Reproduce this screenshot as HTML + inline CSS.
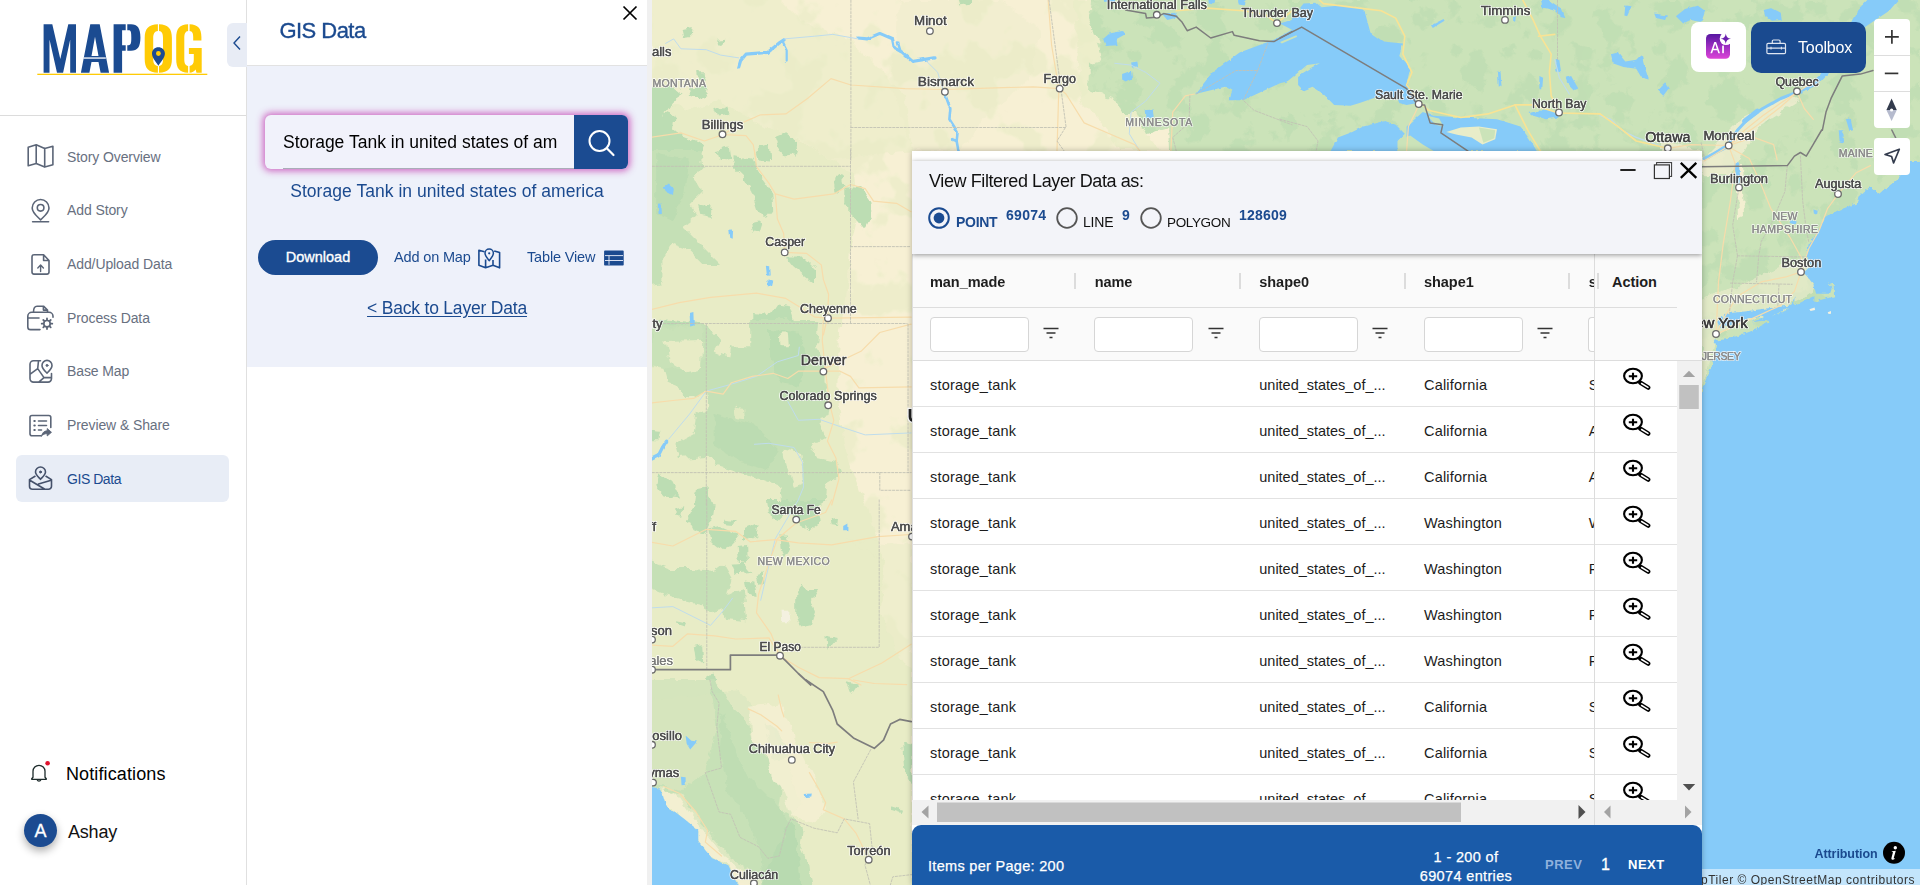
<!DOCTYPE html>
<html lang="en">
<head>
<meta charset="utf-8">
<title>MAPOG - GIS Data</title>
<style>
*{box-sizing:border-box;margin:0;padding:0}
html,body{width:1920px;height:885px;overflow:hidden;background:#fff;font-family:"Liberation Sans",sans-serif;color:#000}
.abs{position:absolute}
#sidebar{position:absolute;left:0;top:0;width:247px;height:885px;background:#fff;border-right:1px solid #e0e0e0}
#sidesep{position:absolute;left:0;top:115px;width:246px;height:1px;background:#dcdcdc}
.nav{position:absolute;left:16px;width:213px;height:47px;border-radius:6px}
.nav.active{background:#e8edf6}
.nav svg{position:absolute;left:9px;top:9px;width:30px;height:30px;fill:none;stroke:#5b6577;stroke-width:1.6;stroke-linecap:round;stroke-linejoin:round}
.nav.active svg{stroke:#45516a}
.nav span{position:absolute;left:51px;top:15.500px;font-size:14px;line-height:17px;color:#68707f;white-space:nowrap;letter-spacing:-0.1px}
.nav.active span{color:#1b4a8f;letter-spacing:-0.45px}
#collapse{position:absolute;left:227px;top:23px;width:20px;height:44px;background:#e8ecf5;border-radius:6px 0 0 6px}
#panel{position:absolute;left:247px;top:0;width:400px;height:885px;background:#fff}
#phead{position:absolute;left:0;top:0;width:400px;height:66px;background:#fff;border-bottom:1px solid #e2e2e2}
#ptitle{position:absolute;left:32.500px;top:18.200px;font-size:22px;line-height:26px;color:#1b4a8f;letter-spacing:-0.55px;white-space:nowrap;-webkit-text-stroke:0.350px #1b4a8f}
#pbody{position:absolute;left:0;top:66px;width:400px;height:301px;background:#eef1fa}
#strip{position:absolute;left:647px;top:0;width:5px;height:885px;background:#f0f0f0}
#map{position:absolute;left:652px;top:0;width:1268px;height:885px;background:#f7f0d4;overflow:hidden}

#tw{z-index:5;position:absolute;left:912px;top:151px;width:790px;height:734px;background:#fff;box-shadow:0 0 6px rgba(0,0,0,.28);overflow:hidden;font-family:"Liberation Sans",sans-serif}
#twh{position:absolute;left:0;top:10px;width:790px;height:93px;background:#f3f4f9;box-shadow:0 1px 5px rgba(0,0,0,.42);z-index:3}
#grid{position:absolute;left:0;top:103px;width:790px;height:546px;background:#fff;overflow:hidden}
#ghead{position:absolute;left:0;top:0;width:790px;height:107px;background:#fafafa}
.hl{position:absolute;left:0;height:1px;background:#dddddd}
.ch{position:absolute;top:19px;font-size:14.500px;line-height:18px;color:#1e1e1e;font-weight:bold;letter-spacing:-0.05px;white-space:nowrap;}
.cs{position:absolute;top:19px;width:2px;height:16px;background:#dcdcdc}
.fi{position:absolute;top:63px;width:99px;height:35px;border:1px solid #d6d6d6;border-radius:4px;background:#fff}
.fic{position:absolute;top:71.500px;width:16px;height:14px}
.row{position:absolute;left:0;width:765px;height:46px;border-bottom:1px solid #e2e2e2;background:#fff}
.c{position:absolute;top:14.500px;font-size:14.500px;line-height:18px;color:#1c1c1c;white-space:nowrap;letter-spacing:0.2px}
.zi{position:absolute;left:705px;top:3px;width:40px;height:32px}
#pin{position:absolute;left:682px;top:0;width:1px;height:546px;background:#dcdcdc}
#tf{position:absolute;left:0;top:674px;width:790px;height:60px;background:#1a5ba9;border-radius:9px 9px 0 0;color:#fff}
</style>
</head>
<body>
<!-- MAP -->
<div id="map">
<!--MS--><svg class="abs" style="left:0;top:0" width="1268" height="885" viewBox="652 0 1268 885">
<rect x="652" y="0" width="1268" height="885" fill="#f7f0d4"/>
<defs><filter id="rough" x="-5%" y="-5%" width="110%" height="110%"><feTurbulence type="fractalNoise" baseFrequency="0.09" numOctaves="3" seed="7" result="n"/><feDisplacementMap in="SourceGraphic" in2="n" scale="9" xChannelSelector="R" yChannelSelector="G"/></filter><filter id="rough2" x="-5%" y="-5%" width="110%" height="110%"><feTurbulence type="fractalNoise" baseFrequency="0.15" numOctaves="2" seed="3" result="n"/><feDisplacementMap in="SourceGraphic" in2="n" scale="3" xChannelSelector="R" yChannelSelector="G"/></filter><filter id="rough3" x="-5%" y="-5%" width="110%" height="110%"><feTurbulence type="fractalNoise" baseFrequency="0.22" numOctaves="2" seed="11" result="n"/><feDisplacementMap in="SourceGraphic" in2="n" scale="5" xChannelSelector="R" yChannelSelector="G"/></filter><filter id="mot" color-interpolation-filters="sRGB" x="0" y="0" width="100%" height="100%"><feTurbulence type="fractalNoise" baseFrequency="0.022" numOctaves="4" seed="5"/><feColorMatrix type="matrix" values="0 0 0 0 0.925  0 0 0 0 0.93  0 0 0 0 0.79  0 0 0 14 -7.6"/></filter><filter id="motg" color-interpolation-filters="sRGB" x="0" y="0" width="100%" height="100%"><feTurbulence type="fractalNoise" baseFrequency="0.035" numOctaves="4" seed="21"/><feColorMatrix type="matrix" values="0 0 0 0 0.74  0 0 0 0 0.865  0 0 0 0 0.70  0 0 0 14 -7.5"/></filter><clipPath id="negreen"><path d="M1091 -20L1089 18L1098 42L1102 60L1089 63L1088 90L1111 98L1122 112L1135 112L1146 134L1169 127L1171 170L1690 170L1690 440L1940 440L1940 -20Z"/></clipPath></defs>
<rect x="652" y="0" width="520" height="885" filter="url(#mot)" opacity="0.8"/>
<g filter="url(#rough)">
<path d="M652.0 95.0 L690.0 110.0 L720.0 100.0 L760.0 125.0 L800.0 140.0 L830.0 160.0 L853.0 175.0 L858.0 215.0 L850.0 250.0 L846.0 300.0 L840.0 330.0 L838.0 400.0 L846.0 450.0 L860.0 490.0 L872.0 520.0 L884.0 560.0 L880.0 610.0 L895.0 650.0 L912.0 670.0 L912.0 910.0 L630.0 910.0 L630.0 95.0Z" fill="#e8ecc6" />
<path d="M630.0 -20.0 L760.0 -20.0 L800.0 20.0 L850.0 40.0 L880.0 70.0 L905.0 95.0 L912.0 150.0 L830.0 160.0 L800.0 140.0 L760.0 125.0 L720.0 100.0 L690.0 110.0 L630.0 95.0Z" fill="#e8ecc6" opacity="0.58"/>
<path d="M900.0 0.0 L1000.0 0.0 L1040.0 30.0 L1030.0 80.0 L990.0 110.0 L960.0 150.0 L912.0 150.0 L890.0 80.0Z" fill="#e8ecc6" opacity="0.3"/>
<path d="M846.0 540.0 L912.0 545.0 L912.0 670.0 L895.0 650.0 L880.0 610.0 L884.0 560.0Z" fill="#e8ecc6" opacity="0.5"/>
<path d="M1091.0 0.0 L1089.0 18.0 L1098.0 42.0 L1102.0 60.0 L1089.0 63.0 L1088.0 90.0 L1111.0 98.0 L1122.0 112.0 L1135.0 112.0 L1146.0 134.0 L1169.0 127.0 L1171.0 170.0 L1940.0 170.0 L1940.0 -20.0 L1091.0 -20.0Z" fill="#cbe3b9" />
<path d="M1690.0 151.0 L1940.0 151.0 L1940.0 440.0 L1690.0 440.0Z" fill="#cbe3b9" />
<path d="M1075.0 0.0 L1091.0 0.0 L1089.0 18.0 L1098.0 42.0 L1102.0 60.0 L1089.0 63.0 L1088.0 90.0 L1111.0 98.0 L1122.0 112.0 L1135.0 112.0 L1146.0 134.0 L1160.0 151.0 L1120.0 151.0 L1100.0 120.0 L1080.0 100.0 L1078.0 60.0Z" fill="#e8ecc6" opacity="0.7"/>
<g clip-path="url(#negreen)"><rect x="1080" y="0" width="840" height="440" filter="url(#motg)" opacity="0.7"/></g>
<path d="M1700.0 160.0 L1740.0 120.0 L1790.0 95.0 L1800.0 100.0 L1760.0 125.0 L1745.0 150.0 L1730.0 175.0 L1705.0 175.0Z" fill="#f7f0d4" opacity="0.7"/>
<path d="M1660.0 140.0 L1700.0 150.0 L1705.0 165.0 L1660.0 155.0Z" fill="#f7f0d4" opacity="0.7"/>
<path d="M1701.0 300.0 L1740.0 285.0 L1790.0 262.0 L1812.0 268.0 L1815.0 290.0 L1800.0 300.0 L1770.0 315.0 L1740.0 322.0 L1716.0 336.0 L1708.0 372.0 L1701.0 385.0Z" fill="#f7f0d4" opacity="0.5"/>
<path d="M1736.0 165.0 L1742.0 165.0 L1744.0 215.0 L1738.0 218.0Z" fill="#f7f0d4" opacity="0.9"/>
<path d="M637.0 86.8 L673.7 86.8 L682.7 94.0 L671.9 101.2 L662.8 115.7 L671.9 126.6 L684.5 137.4 L704.4 144.6 L697.2 160.0 L637.0 160.0Z" fill="#bcddb3" />
<path d="M690.0 88.6 L704.4 86.8 L709.9 94.0 L699.0 98.5 L690.9 95.8Z" fill="#bcddb3" />
<path d="M697.2 72.3 L706.2 72.3 L704.4 79.6 L698.1 80.5Z" fill="#bcddb3" />
<path d="M682.7 28.9 L691.8 27.1 L690.9 35.3 L684.5 36.2Z" fill="#bcddb3" />
<path d="M716.2 40.7 L724.3 39.8 L722.5 46.1 L717.1 45.2Z" fill="#bcddb3" />
<path d="M715.3 110.3 L727.9 105.8 L726.1 115.7 L718.0 117.5Z" fill="#bcddb3" />
<path d="M662.8 110.3 L675.5 115.7 L673.7 130.2 L664.7 126.6Z" fill="#bcddb3" />
<path d="M774.9 137.4 L785.8 132.9 L794.8 139.2 L796.6 153.7 L785.8 155.5 L778.6 148.3Z" fill="#bcddb3" />
<path d="M758.7 148.3 L769.5 144.6 L771.3 160.0 L760.5 160.0Z" fill="#bcddb3" />
<path d="M717.1 150.1 L729.7 147.4 L731.6 160.0 L718.9 160.0Z" fill="#bcddb3" />
<path d="M953.0 -15.0 L972.0 -15.0 L972.0 2.7 L959.4 4.5Z" fill="#bcddb3" />
<path d="M637.0 150.0 L700.1 150.0 L702.2 166.7 L693.8 177.2 L702.2 191.8 L689.6 204.3 L695.9 216.9 L683.3 227.3 L693.8 237.8 L706.3 250.3 L721.0 264.9 L704.2 264.9 L689.6 250.3 L672.9 244.0 L662.4 258.7 L662.4 283.8 L637.0 287.9Z" fill="#c5e0b6" />
<path d="M733.5 156.3 L752.3 158.4 L760.7 175.1 L771.1 189.7 L772.2 208.5 L764.9 216.9 L758.6 210.6 L752.3 191.8 L741.9 175.1 L733.5 166.7Z" fill="#bcddb3" />
<path d="M844.3 187.6 L861.0 187.6 L871.4 202.2 L872.5 214.8 L865.2 229.4 L852.6 214.8 L844.3 206.4Z" fill="#bcddb3" />
<path d="M833.8 181.3 L842.2 175.1 L845.3 185.5 L835.9 193.9Z" fill="#bcddb3" />
<path d="M785.8 256.6 L802.5 256.6 L815.0 269.1 L815.0 283.8 L806.6 277.5 L794.1 267.0Z" fill="#bcddb3" />
<path d="M752.3 313.0 L769.0 315.1 L777.4 302.6 L789.9 304.6 L796.2 323.5 L810.8 335.0 L752.3 335.0Z" fill="#bcddb3" />
<path d="M698.0 204.3 L711.6 206.4 L710.5 216.9 L700.1 214.8Z" fill="#bcddb3" />
<path d="M750.2 223.1 L763.8 221.1 L760.7 231.5 L752.3 230.5Z" fill="#bcddb3" />
<path d="M716.8 150.0 L727.2 150.0 L728.3 160.4 L718.9 159.4Z" fill="#bcddb3" />
<path d="M756.5 150.0 L770.1 150.0 L768.0 162.5 L758.6 161.5Z" fill="#bcddb3" />
<path d="M789.9 150.0 L798.3 150.0 L796.2 156.3Z" fill="#bcddb3" />
<path d="M664.5 319.3 L704.2 323.5 L714.7 335.0 L637.0 335.0 L637.0 323.5Z" fill="#bcddb3" />
<path d="M750.2 320.0 L819.2 320.0 L817.1 345.1 L825.5 368.1 L825.5 382.7 L829.6 399.4 L827.5 416.1 L819.2 418.2 L825.5 437.0 L810.8 445.4 L817.1 457.9 L835.9 462.1 L840.1 474.6 L825.5 483.0 L823.4 505.0 L781.6 505.0 L779.5 487.2 L756.5 478.8 L735.6 470.5 L714.7 464.2 L708.4 455.8 L679.2 457.9 L675.0 443.3 L693.8 432.9 L695.9 416.1 L708.4 407.8 L706.3 393.1 L683.3 397.3 L679.2 386.9 L668.7 382.7 L664.5 368.1 L637.0 361.8 L637.0 326.3 L706.3 324.2 L721.0 340.9 L714.7 351.3 L729.3 357.6 L731.4 347.2 L750.2 347.2Z" fill="#c5e0b6" />
<path d="M637.0 428.7 L660.4 430.8 L658.3 441.2 L637.0 441.2Z" fill="#bcddb3" />
<path d="M658.3 474.6 L670.8 480.9 L679.2 497.6 L664.5 495.5 L656.2 485.1Z" fill="#bcddb3" />
<path d="M695.9 489.3 L706.3 487.2 L712.6 505.0 L693.8 505.0Z" fill="#bcddb3" />
<path d="M637.0 556.4 L670.8 569.0 L693.8 569.0 L714.7 571.1 L723.1 564.8 L731.4 579.4 L727.2 596.1 L735.6 592.0 L744.0 589.9 L746.0 621.2 L725.1 619.1 L723.1 608.7 L708.4 612.9 L702.2 604.5 L683.3 600.3 L664.5 594.0 L637.0 583.6Z" fill="#c5e0b6" />
<path d="M687.5 520.9 L695.9 504.2 L714.7 504.2 L712.6 516.7 L704.2 533.4 L691.7 529.3Z" fill="#bcddb3" />
<path d="M708.4 529.3 L721.0 527.2 L735.6 533.4 L737.7 541.8 L721.0 550.2 L710.5 541.8Z" fill="#bcddb3" />
<path d="M744.0 529.3 L758.6 523.0 L756.5 535.5 L744.0 539.7Z" fill="#bcddb3" />
<path d="M766.9 500.0 L825.5 500.0 L817.1 510.4 L819.2 523.0 L810.8 529.3 L798.3 520.9 L785.8 512.5 L777.4 520.9 L769.0 514.6Z" fill="#bcddb3" />
<path d="M779.5 534.5 L787.8 534.5 L789.9 548.1 L783.7 558.5 L780.5 548.1Z" fill="#bcddb3" />
<path d="M796.2 596.1 L802.5 581.5 L806.6 589.9 L817.1 589.9 L810.8 600.3 L815.0 612.9 L810.8 625.4 L800.4 627.5 L796.2 612.9Z" fill="#bcddb3" />
<path d="M737.7 546.0 L746.0 544.9 L747.1 562.7 L738.7 561.7Z" fill="#bcddb3" />
<path d="M731.4 563.7 L744.0 562.7 L752.3 573.1 L735.6 574.2Z" fill="#bcddb3" />
<path d="M746.0 579.4 L754.4 580.5 L756.5 596.1 L748.1 594.0Z" fill="#bcddb3" />
<path d="M756.5 576.3 L762.8 574.2 L763.8 582.5 L758.6 582.5Z" fill="#bcddb3" />
<path d="M826.5 637.9 L835.9 640.0 L827.5 650.5Z" fill="#bcddb3" />
<path d="M675.0 508.4 L683.3 506.3 L682.3 515.7 L676.0 514.6Z" fill="#bcddb3" />
<path d="M723.1 518.8 L735.6 519.9 L734.5 524.0 L724.1 523.0Z" fill="#bcddb3" />
<path d="M830.7 518.8 L839.0 517.8 L838.0 526.1 L831.7 525.1Z" fill="#bcddb3" />
<path d="M693.8 646.3 L702.2 644.2 L703.2 660.9 L695.9 662.0Z" fill="#bcddb3" />
<path d="M676.0 621.2 L685.4 623.3 L683.3 627.5 L677.1 625.4Z" fill="#bcddb3" />
<path d="M704.2 675.5 L714.7 673.5 L716.8 685.0 L704.2 685.0Z" fill="#bcddb3" />
<path d="M637.0 680.0 L714.5 680.0 L728.4 703.2 L744.6 717.0 L751.6 740.2 L767.8 756.4 L772.4 772.6 L781.7 788.8 L779.3 809.7 L790.9 816.6 L802.5 830.5 L800.2 846.7 L809.4 865.2 L814.1 899.9 L767.8 899.9 L758.5 876.8 L728.4 856.0 L709.9 832.8 L698.3 818.9 L682.1 795.8 L661.3 788.8 L637.0 784.2Z" fill="#c5e0b6" />
<path d="M765.5 724.0 L781.7 733.3 L788.6 756.4 L772.4 758.7Z" fill="#bcddb3" />
<path d="M846.5 682.3 L858.1 684.6 L851.1 695.0Z" fill="#bcddb3" />
<path d="M902.1 742.5 L912.5 744.8 L912.5 788.8 L904.4 772.6Z" fill="#bcddb3" />
<path d="M890.5 806.2 L902.1 809.7 L900.9 813.1 L890.5 809.7Z" fill="#bcddb3" />
<path d="M721.5 714.7 L744.6 772.6 L772.4 800.4 L795.6 830.5 L802.5 899.9 L763.1 899.9 L760.8 856.0 L751.6 828.2 L728.4 791.1 L719.1 749.5Z" fill="#b3d8ad" opacity="0.75"/>
<path d="M769.0 328.4 L798.3 332.5 L810.8 361.8 L798.3 386.9 L781.6 382.7 L769.0 357.6Z" fill="#b3d8ad" opacity="0.6"/>
<path d="M714.7 414.0 L752.3 424.5 L777.4 449.6 L769.0 470.5 L739.8 462.1 L714.7 445.4Z" fill="#b3d8ad" opacity="0.5"/>
<path d="M656.2 154.2 L689.6 158.4 L685.4 191.8 L672.9 219.0 L656.2 212.7Z" fill="#b3d8ad" opacity="0.5"/>
<path d="M652.0 330.0 L700.0 326.0 L706.0 360.0 L690.0 372.0 L652.0 366.0Z" fill="#cbe3b9" opacity="0.6"/>
<path d="M652.0 700.0 L740.0 690.0 L780.0 740.0 L800.0 800.0 L760.0 885.0 L652.0 885.0Z" fill="#cbe3b9" opacity="0.35"/>
<path d="M664.5 340.9 L702.2 339.9 L701.1 368.1 L685.4 372.2 L668.7 361.8Z" fill="#e8ecc6" />
<path d="M779.5 332.5 L787.8 332.5 L788.9 347.2 L780.5 347.2Z" fill="#e8ecc6" />
<path d="M781.6 449.6 L800.4 453.8 L804.6 483.0 L794.1 487.2 L785.8 466.3Z" fill="#e8ecc6" />
<path d="M734.5 406.7 L744.0 407.8 L745.0 418.2 L735.6 417.2Z" fill="#e8ecc6" opacity="0.8"/>
<path d="M637.0 680.0 L709.9 680.0 L716.8 726.3 L705.3 772.6 L682.1 791.1 L661.3 786.5 L637.0 781.9Z" fill="#e8ecc6" opacity="0.45"/>
<path d="M661.3 788.8 L677.5 795.8 L693.7 818.9 L706.4 832.8 L723.8 856.0 L751.6 876.8 L760.8 899.9 L744.6 899.9 L728.4 865.2 L712.2 858.3 L698.3 842.1 L698.3 830.5 L684.4 818.9 L665.9 805.0Z" fill="#f7f0d4" opacity="0.85"/>
<path d="M749.2 707.8 L781.7 703.2 L800.2 749.5 L814.1 777.2 L825.7 809.7 L814.1 823.6 L790.9 814.3 L781.7 788.8 L772.4 772.6 L767.8 756.4 L751.6 740.2Z" fill="#f7f0d4" opacity="0.75"/>
<path d="M780.5 611.8 L788.3 611.8 L788.3 622.3 L781.2 622.3Z" fill="#f4f1e0" />
</g>
<path d="M1195.3 94.0 L1212.5 72.3 L1239.6 52.4 L1275.7 38.9 L1292.0 29.8 L1280.0 23.5 L1290.8 19.9 L1303.5 3.6 L1316.2 2.7 L1321.6 7.2 L1339.7 5.4 L1359.6 7.2 L1365.0 12.7 L1370.4 32.5 L1383.1 41.6 L1402.9 43.4 L1399.3 56.0 L1410.2 68.7 L1406.6 83.2 L1413.8 94.0 L1417.4 103.1 L1406.6 104.9 L1399.3 103.1 L1397.5 98.5 L1377.6 96.7 L1359.6 103.1 L1350.5 105.8 L1334.2 104.9 L1323.4 94.0 L1312.5 86.8 L1303.5 90.4 L1298.1 85.0 L1298.1 75.9 L1312.5 66.9 L1319.8 63.3 L1307.1 65.1 L1296.3 74.1 L1287.2 81.4 L1280.0 83.2 L1268.5 88.6 L1243.2 100.3 L1228.7 100.3 L1232.4 90.4 L1225.1 86.8Z" fill="#86cbf9" filter="url(#rough2)"/>
<path d="M1280.0 41.9 L1296.3 35.3 L1297.2 36.7 L1281.8 43.4Z" fill="#cbe3b9" />
<path d="M1951.1 151.4 L1920.0 160.9 L1910.7 160.9 L1898.9 177.5 L1879.9 194.1 L1870.4 187.0 L1860.9 194.1 L1856.2 203.6 L1837.2 210.7 L1825.3 217.8 L1819.4 229.7 L1808.7 243.9 L1806.3 255.8 L1811.1 265.3 L1803.9 272.4 L1813.4 284.3 L1815.8 293.8 L1830.0 293.8 L1832.4 286.7 L1827.7 281.9 L1833.6 285.5 L1834.1 296.2 L1813.4 302.1 L1813.4 296.2 L1803.9 300.9 L1794.4 305.6 L1794.4 297.3 L1790.9 305.6 L1784.9 310.4 L1770.7 317.5 L1791.3 305.4 L1769.6 308.1 L1747.9 310.9 L1726.2 313.6 L1717.1 321.7 L1719.9 327.1 L1747.9 319.0 L1762.4 316.6 L1763.8 318.1 L1751.5 322.6 L1766.0 319.9 L1770.5 321.7 L1749.7 331.7 L1728.0 338.9 L1713.5 340.7 L1717.1 345.2 L1713.5 361.5 L1708.1 374.2 L1703.6 385.0 L1700.9 394.1 L1695.0 560.0 L1690.0 920.0 L1950.0 920.0 L1950.0 150.0Z" fill="#86cbf9" filter="url(#rough3)"/>
<path d="M1809.4 309.2 L1814.6 307.5 L1815.1 309.9 L1810.6 311.1Z" fill="#f4f1e0" />
<path d="M1827.7 312.3 L1831.0 310.9 L1831.0 313.7 L1828.6 314.0Z" fill="#f4f1e0" />
<g filter="url(#rough2)">
<path d="M638.1 779.6 L637.0 784.2 L661.3 788.8 L665.9 805.0 L684.4 818.9 L698.3 830.5 L698.3 842.1 L712.2 858.3 L728.4 865.2 L744.6 899.9 L753.9 902.3 L638.1 902.3Z" fill="#86cbf9" />
<path d="M1330.6 151.1 L1337.9 137.4 L1352.3 132.0 L1363.2 126.6 L1384.9 121.1 L1395.7 124.8 L1404.8 133.8 L1397.5 141.0 L1397.5 151.1Z" fill="#86cbf9" />
<path d="M1406.6 126.6 L1422.8 112.1 L1433.7 115.7 L1460.8 117.5 L1497.0 119.3 L1520.5 126.6 L1533.1 144.6 L1536.7 151.1 L1406.6 151.1Z" fill="#86cbf9" />
<path d="M1529.5 113.0 L1538.5 110.6 L1558.4 111.2 L1558.4 117.5 L1545.8 119.3 L1533.1 115.7Z" fill="#86cbf9" />
<path d="M1538.5 -15.0 L1551.2 1.8 L1562.0 9.0 L1565.7 18.1 L1561.1 17.2 L1554.8 10.8 L1542.2 7.2Z" fill="#86cbf9" />
<path d="M1513.2 16.3 L1515.9 16.3 L1515.0 23.5 L1513.2 22.6Z" fill="#86cbf9" />
<path d="M1431.0 25.3 L1443.6 19.0 L1444.5 20.8 L1432.8 28.0Z" fill="#86cbf9" />
<path d="M1497.9 71.4 L1500.6 72.3 L1501.5 85.0 L1498.8 86.8Z" fill="#86cbf9" />
<path d="M1539.4 75.9 L1543.1 77.7 L1542.2 89.5 L1539.4 88.6Z" fill="#86cbf9" />
<path d="M1565.7 77.7 L1571.1 75.9 L1578.3 88.6 L1573.8 90.4 L1568.4 85.0Z" fill="#86cbf9" />
<path d="M1554.8 59.7 L1559.3 59.7 L1561.1 72.3 L1556.6 71.4Z" fill="#86cbf9" />
<path d="M1103.1 38.9 L1109.4 33.4 L1122.1 31.1 L1124.8 34.4 L1116.6 38.9 L1117.5 45.2 L1105.8 46.1Z" fill="#86cbf9" />
<path d="M1122.1 74.1 L1132.0 70.5 L1132.9 77.7 L1125.7 81.4 L1122.1 79.6Z" fill="#86cbf9" />
<path d="M1131.1 62.4 L1137.4 61.5 L1138.0 66.0 L1132.0 67.8Z" fill="#86cbf9" />
<path d="M1144.7 110.3 L1152.8 109.4 L1153.7 117.5 L1145.6 118.4Z" fill="#86cbf9" />
<path d="M1161.8 13.6 L1176.3 12.7 L1178.1 17.2 L1167.3 19.9Z" fill="#86cbf9" />
<path d="M1102.2 -15.0 L1116.6 -15.0 L1114.8 1.8 L1104.0 1.8Z" fill="#86cbf9" />
<path d="M1207.0 -15.0 L1217.9 -15.0 L1214.3 4.5 L1208.8 3.6Z" fill="#86cbf9" />
<path d="M1236.0 -15.0 L1246.8 -15.0 L1245.0 5.4 L1238.7 4.5Z" fill="#86cbf9" />
<path d="M1851.3 21.7 L1858.5 9.0 L1882.0 -15.0 L1911.0 -15.0 L1889.3 10.8 L1867.6 25.3 L1860.4 30.7Z" fill="#86cbf9" />
<path d="M1826.0 68.7 L1813.3 81.4 L1797.1 92.2 L1798.9 94.0 L1817.0 85.0 L1829.6 71.4Z" fill="#86cbf9" />
<path d="M1763.6 9.9 L1771.8 8.1 L1780.8 12.7 L1781.7 19.9 L1771.8 20.8 L1765.4 15.4Z" fill="#86cbf9" />
<path d="M1675.9 16.3 L1685.0 9.0 L1697.6 5.4 L1704.9 10.8 L1701.2 21.7 L1690.4 19.9 L1683.2 23.5Z" fill="#86cbf9" />
<path d="M1610.8 54.2 L1618.1 52.4 L1625.3 61.5 L1636.2 59.7 L1641.6 54.2 L1645.2 68.7 L1648.8 79.6 L1641.6 77.7 L1636.2 68.7 L1623.5 66.9 L1612.7 63.3Z" fill="#86cbf9" />
<path d="M1657.9 90.4 L1665.1 83.2 L1668.7 88.6 L1663.3 95.8Z" fill="#86cbf9" />
<path d="M1625.3 5.4 L1631.6 6.3 L1627.1 16.3 L1624.4 15.4Z" fill="#86cbf9" />
<path d="M1654.2 13.6 L1666.9 15.4 L1665.1 19.9 L1656.0 18.1Z" fill="#86cbf9" />
<path d="M1845.9 119.3 L1850.4 118.4 L1853.1 130.2 L1849.5 131.1Z" fill="#86cbf9" />
<path d="M1838.7 130.2 L1843.2 130.2 L1844.1 142.8 L1839.6 141.0Z" fill="#86cbf9" />
<path d="M1734.6 163.2 L1738.7 163.2 L1740.3 177.5 L1737.5 191.7 L1735.1 189.3 L1736.3 177.5Z" fill="#86cbf9" />
<path d="M1813.4 209.5 L1817.7 210.7 L1817.0 215.0 L1813.9 213.6Z" fill="#86cbf9" />
<path d="M1789.7 219.7 L1796.8 221.4 L1795.6 224.5 L1790.9 223.0Z" fill="#86cbf9" />
<path d="M662.4 187.6 L667.7 183.4 L673.9 188.7 L672.9 194.9 L666.6 191.8Z" fill="#86cbf9" />
<path d="M657.9 204.8 L661.4 204.3 L662.0 213.7 L658.7 214.4Z" fill="#86cbf9" />
<path d="M729.3 229.8 L733.1 229.4 L732.7 238.8 L730.2 237.8Z" fill="#86cbf9" />
<path d="M765.9 266.0 L770.1 264.9 L770.7 275.4 L766.9 275.8Z" fill="#86cbf9" />
<path d="M767.4 279.6 L773.2 280.6 L772.2 285.8 L768.0 287.9Z" fill="#86cbf9" />
<path d="M689.6 313.0 L693.4 312.0 L693.8 325.5 L690.2 326.6Z" fill="#86cbf9" />
<path d="M843.2 526.1 L847.4 523.4 L847.4 530.3 L843.2 530.3Z" fill="#86cbf9" />
<path d="M685.6 735.6 L691.4 740.7 L697.1 741.4 L690.2 749.5 L686.7 743.7Z" fill="#86cbf9" />
<path d="M680.9 776.8 L685.6 777.2 L685.6 784.7 L681.6 785.3Z" fill="#86cbf9" />
<path d="M803.7 793.9 L811.8 793.5 L811.3 796.5 L804.4 797.2Z" fill="#86cbf9" />
</g>
<path d="M1446.3 132.0 L1460.8 127.5 L1478.9 126.6 L1497.0 129.3 L1495.2 139.2 L1482.5 144.6 L1471.6 137.4 L1457.2 134.7Z" fill="#e9edc9" />
<path d="M1478.9 127.5 L1495.2 130.2 L1494.2 138.3 L1483.4 142.8Z" fill="#cbe3b9" />
<path d="M1397.5 151.1 L1399.3 139.2 L1410.2 135.6 L1422.8 144.6 L1433.7 151.1Z" fill="#cbe3b9" />
<path d="M1427.4 115.7 L1439.1 118.4 L1443.6 126.6 L1435.5 124.8Z" fill="#cbe3b9" />
<g filter="url(#rough2)">
<path d="M738.8 66.9 L740.6 60.6 L746.0 54.2 L755.1 53.3 L767.7 52.4 L778.6 43.4 L784.0 39.8" fill="none" stroke="#86cbf9" stroke-width="3.2" stroke-linejoin="round" stroke-linecap="round" />
<path d="M782.2 41.6 L786.7 50.6 L786.7 60.6" fill="none" stroke="#86cbf9" stroke-width="2.2" stroke-linejoin="round" stroke-linecap="round" />
<path d="M858.1 38.0 L867.2 38.9 L879.8 33.4 L892.5 38.9 L894.3 47.9 L902.4 52.4 L912.4 61.5 L923.2 59.7 L934.0 57.9" fill="none" stroke="#86cbf9" stroke-width="3.2" stroke-linejoin="round" stroke-linecap="round" />
<path d="M897.9 42.5 L900.6 51.5" fill="none" stroke="#86cbf9" stroke-width="2.5" stroke-linejoin="round" stroke-linecap="round" />
<path d="M944.9 94.0 L950.3 108.5 L949.4 119.3 L957.6 132.0 L956.6 141.0 L952.1 139.2" fill="none" stroke="#86cbf9" stroke-width="2.6" stroke-linejoin="round" stroke-linecap="round" />
<path d="M956.6 141.0 L958.5 151.1" fill="none" stroke="#86cbf9" stroke-width="2.6" stroke-linejoin="round" stroke-linecap="round" />
<path d="M637.0 466.3 L658.3 455.8 L662.4 447.5 L666.6 441.2" fill="none" stroke="#86cbf9" stroke-width="3.2" stroke-linejoin="round" stroke-linecap="round" />
</g>
<path d="M1797.1 92.2 L1780.8 98.5 L1762.7 108.5 L1748.3 118.4 L1737.4 130.2 L1728.4 144.6 L1708.5 157.3" fill="none" stroke="#86cbf9" stroke-width="3" stroke-linejoin="round" stroke-linecap="round" />
<path d="M1757.3 111.2 L1744.6 121.1" fill="none" stroke="#86cbf9" stroke-width="5" stroke-linejoin="round" stroke-linecap="round" />
<path d="M1704.2 158.5 L1716.1 152.5 L1728.0 146.6" fill="none" stroke="#86cbf9" stroke-width="3" stroke-linejoin="round" stroke-linecap="round" />
<path d="M665.6 43.4 L673.7 38.9 L680.9 48.8 L706.2 49.7 L720.7 55.1 L738.8 57.9" fill="none" stroke="#bfdcec" stroke-width="1" stroke-linejoin="round" stroke-linecap="round" />
<path d="M784.0 38.9 L814.7 36.2 L832.8 34.4 L858.1 38.9" fill="none" stroke="#bfdcec" stroke-width="1" stroke-linejoin="round" stroke-linecap="round" />
<path d="M926.8 61.5 L937.7 72.3 L941.3 85.0 L944.9 92.2" fill="none" stroke="#bfdcec" stroke-width="1" stroke-linejoin="round" stroke-linecap="round" />
<path d="M1114.8 63.3 L1131.1 65.1 L1145.6 72.3 L1160.0 83.2 L1145.6 101.2 L1131.1 112.1 L1129.3 133.8 L1138.3 148.3" fill="none" stroke="#bfdcec" stroke-width="1" stroke-linejoin="round" stroke-linecap="round" />
<path d="M668.7 439.1 L689.6 414.0 L706.3 391.1 L729.3 384.8 L756.5 376.4 L777.4 361.8 L798.3 355.5 L799.3 347.2" fill="none" stroke="#bfdcec" stroke-width="1" stroke-linejoin="round" stroke-linecap="round" />
<path d="M787.8 401.5 L798.3 420.3 L819.2 419.3 L840.1 426.6 L865.2 434.9 L911.1 432.9" fill="none" stroke="#bfdcec" stroke-width="1" stroke-linejoin="round" stroke-linecap="round" />
<path d="M754.4 444.3 L769.0 443.3 L794.1 447.5 L802.5 462.1 L803.5 487.2 L798.3 499.7" fill="none" stroke="#bfdcec" stroke-width="1" stroke-linejoin="round" stroke-linecap="round" />
<path d="M798.3 500.0 L785.8 520.9 L775.3 538.7 L768.0 569.0 L760.7 600.3" fill="none" stroke="#bfdcec" stroke-width="1" stroke-linejoin="round" stroke-linecap="round" />
<path d="M637.0 608.7 L672.9 606.6 L693.8 617.0 L710.5 625.4 L723.1 610.8 L732.5 598.2" fill="none" stroke="#bfdcec" stroke-width="1" stroke-linejoin="round" stroke-linecap="round" />
<path d="M1554.8 59.7 L1559.3 77.7 L1569.3 94.0" fill="none" stroke="#bfdcec" stroke-width="1.2" stroke-linejoin="round" stroke-linecap="round" />
<path d="M1600.0 115.7 L1610.8 119.3 L1621.7 130.2 L1636.2 137.4 L1666.9 148.3" fill="none" stroke="#bfdcec" stroke-width="1.2" stroke-linejoin="round" stroke-linecap="round" />
<path d="M637.0 139.2 L680.9 132.9 L704.4 141.0 L722.5 134.7 L746.0 121.1 L760.5 114.8 L785.8 113.9 L807.5 98.5 L831.0 78.6 L850.9 85.0 L905.1 88.6 L944.9 89.5 L972.0 88.6" fill="none" stroke="#f7dcab" stroke-width="1.2" stroke-linejoin="round" stroke-linecap="round" />
<path d="M722.5 134.7 L746.0 135.6 L753.2 144.6 L756.0 160.0" fill="none" stroke="#f7dcab" stroke-width="1.2" stroke-linejoin="round" stroke-linecap="round" />
<path d="M972.0 88.6 L1033.5 86.8 L1059.7 88.6 L1066.0 94.0 L1084.1 122.9 L1109.4 133.8 L1134.7 144.6 L1140.1 151.1" fill="none" stroke="#f7dcab" stroke-width="1.2" stroke-linejoin="round" stroke-linecap="round" />
<path d="M1047.0 -15.0 L1051.6 45.2 L1058.8 88.6 L1057.0 151.1" fill="none" stroke="#f7dcab" stroke-width="1.2" stroke-linejoin="round" stroke-linecap="round" />
<path d="M1170.9 151.1 L1172.7 112.1 L1185.3 95.8 L1194.4 94.0" fill="none" stroke="#f7dcab" stroke-width="1.2" stroke-linejoin="round" stroke-linecap="round" />
<path d="M754.4 150.0 L756.5 166.7 L769.0 183.4 L775.3 193.9 L794.1 199.1 L833.8 193.9 L850.5 184.5 L865.2 188.7 L873.5 201.2 L896.5 203.3 L911.1 211.7" fill="none" stroke="#f7dcab" stroke-width="1.2" stroke-linejoin="round" stroke-linecap="round" />
<path d="M775.3 193.9 L777.4 219.0 L783.7 233.6 L784.7 252.4 L806.6 253.4 L821.3 264.9 L823.4 279.6 L828.6 294.2 L827.5 317.2 L823.4 335.0" fill="none" stroke="#f7dcab" stroke-width="1.2" stroke-linejoin="round" stroke-linecap="round" />
<path d="M637.0 313.0 L679.2 302.6 L710.5 297.3 L756.5 293.2 L785.8 298.4 L802.5 308.8 L815.0 317.2 L827.5 318.2 L911.1 317.2" fill="none" stroke="#f7dcab" stroke-width="1.2" stroke-linejoin="round" stroke-linecap="round" />
<path d="M637.0 404.6 L672.9 400.5 L693.8 398.4 L706.3 391.1 L723.1 394.2 L731.4 382.7 L752.3 376.4 L773.2 373.3 L787.8 378.5 L798.3 371.2 L823.4 371.2 L840.1 371.2 L850.5 376.4 L858.9 387.9 L911.1 386.9" fill="none" stroke="#f7dcab" stroke-width="1.2" stroke-linejoin="round" stroke-linecap="round" />
<path d="M823.4 320.0 L822.3 340.9 L825.5 371.2 L829.6 403.6 L833.8 420.3 L827.5 441.2 L835.9 457.9 L839.0 478.8 L831.7 505.0" fill="none" stroke="#f7dcab" stroke-width="1.2" stroke-linejoin="round" stroke-linecap="round" />
<path d="M825.5 368.1 L861.0 351.3 L879.8 332.5 L911.1 324.2" fill="none" stroke="#f7dcab" stroke-width="1.2" stroke-linejoin="round" stroke-linecap="round" />
<path d="M637.0 539.7 L672.9 546.0 L706.3 529.3 L735.6 531.3 L750.2 541.8 L775.3 539.7 L798.3 542.8 L831.7 544.9 L877.7 536.6 L911.1 534.5" fill="none" stroke="#f7dcab" stroke-width="1.2" stroke-linejoin="round" stroke-linecap="round" />
<path d="M831.7 500.0 L825.5 512.5 L796.2 523.0 L777.4 538.7 L769.0 562.7 L758.6 594.0 L756.5 612.9 L771.1 633.8 L779.5 655.7" fill="none" stroke="#f7dcab" stroke-width="1.2" stroke-linejoin="round" stroke-linecap="round" />
<path d="M637.0 644.2 L672.9 646.3 L687.5 633.8 L714.7 635.8 L735.6 639.0 L769.0 637.9 L779.5 655.7 L798.3 667.2 L819.2 677.6 L848.4 678.7 L881.9 663.0 L911.1 644.2" fill="none" stroke="#f7dcab" stroke-width="1.2" stroke-linejoin="round" stroke-linecap="round" />
<path d="M848.4 678.7 L861.0 685.0" fill="none" stroke="#f7dcab" stroke-width="1.2" stroke-linejoin="round" stroke-linecap="round" />
<path d="M748.1 708.9 L760.8 714.7 L777.0 726.3 L781.7 730.9" fill="none" stroke="#f7dcab" stroke-width="1.2" stroke-linejoin="round" stroke-linecap="round" />
<path d="M778.2 695.0 L781.7 710.1 L784.0 717.0" fill="none" stroke="#f7dcab" stroke-width="1.2" stroke-linejoin="round" stroke-linecap="round" />
<path d="M809.4 742.5 L828.0 743.7 L837.2 742.1" fill="none" stroke="#f7dcab" stroke-width="1.2" stroke-linejoin="round" stroke-linecap="round" />
<path d="M809.4 772.6 L818.7 788.8 L825.7 802.7 L823.3 809.7 L844.2 818.9 L855.8 832.8 L860.4 842.1 L868.5 859.4" fill="none" stroke="#f7dcab" stroke-width="1.2" stroke-linejoin="round" stroke-linecap="round" />
<path d="M663.6 786.5 L679.8 793.5 L696.0 812.0 L707.6 830.5 L705.3 842.1 L721.5 856.0" fill="none" stroke="#f7dcab" stroke-width="1.2" stroke-linejoin="round" stroke-linecap="round" />
<path d="M853.4 680.0 L874.3 683.5 L906.7 684.6" fill="none" stroke="#f7dcab" stroke-width="1.2" stroke-linejoin="round" stroke-linecap="round" />
<path d="M1704.2 160.9 L1728.0 146.6 L1749.3 158.5 L1761.2 184.6 L1770.7 208.3 L1789.7 236.8 L1801.6 258.2 L1801.1 271.9" fill="none" stroke="#f7dcab" stroke-width="1.2" stroke-linejoin="round" stroke-linecap="round" />
<path d="M1801.1 271.9 L1784.9 277.2 L1761.2 281.9 L1737.5 296.2 L1725.6 315.1 L1716.1 334.1" fill="none" stroke="#f7dcab" stroke-width="1.2" stroke-linejoin="round" stroke-linecap="round" />
<path d="M1838.1 194.1 L1827.7 208.3 L1819.4 229.7 L1808.7 248.7 L1801.1 271.9" fill="none" stroke="#f7dcab" stroke-width="1.2" stroke-linejoin="round" stroke-linecap="round" />
<path d="M1728.7 145.9 L1735.1 163.2 L1730.4 201.2 L1723.2 243.9 L1718.5 281.9 L1716.1 334.1" fill="none" stroke="#f7dcab" stroke-width="1.2" stroke-linejoin="round" stroke-linecap="round" />
<path d="M1838.1 194.1 L1856.2 172.7 L1870.4 165.6" fill="none" stroke="#f7dcab" stroke-width="1.2" stroke-linejoin="round" stroke-linecap="round" />
<path d="M1801.1 271.9 L1794.4 291.4 L1780.2 305.6 L1749.3 319.9 L1716.1 334.1" fill="none" stroke="#f7dcab" stroke-width="1.2" stroke-linejoin="round" stroke-linecap="round" />
<path d="M1667.8 148.3 L1690.4 144.6 L1728.7 145.5 L1755.5 126.6 L1780.8 106.7 L1797.1 92.2" fill="none" stroke="#f7dcab" stroke-width="1.2" stroke-linejoin="round" stroke-linecap="round" />
<path d="M1728.7 145.5 L1744.6 130.2 L1762.7 115.7 L1780.8 103.1 L1797.1 92.2 L1817.0 79.6" fill="none" stroke="#f7dcab" stroke-width="1.2" stroke-linejoin="round" stroke-linecap="round" />
<path d="M1728.7 145.5 L1753.7 137.4 L1773.6 144.6 L1777.2 160.0" fill="none" stroke="#f7dcab" stroke-width="1.2" stroke-linejoin="round" stroke-linecap="round" />
<path d="M1797.1 92.2 L1804.3 108.5 L1813.3 119.3" fill="none" stroke="#f7dcab" stroke-width="1.2" stroke-linejoin="round" stroke-linecap="round" />
<path d="M1303.5 -15.0 L1323.4 3.6 L1359.6 8.1 L1381.2 10.8 L1395.7 18.1 L1404.8 36.2 L1402.9 54.2 L1412.0 72.3 L1406.6 85.0 L1421.0 103.1 L1428.3 110.3 L1460.8 117.5 L1487.9 113.9 L1515.0 104.9 L1533.1 104.9 L1558.4 113.0 L1600.0 113.9" fill="none" stroke="#f9e394" stroke-width="1.6" stroke-linejoin="round" stroke-linecap="round" />
<path d="M1515.0 -15.0 L1533.1 19.9 L1540.4 36.2 L1551.2 54.2 L1549.4 72.3 L1551.2 95.8 L1558.4 110.3" fill="none" stroke="#f9e394" stroke-width="1.6" stroke-linejoin="round" stroke-linecap="round" />
<path d="M1538.5 36.2 L1554.8 34.4" fill="none" stroke="#f9e394" stroke-width="1.6" stroke-linejoin="round" stroke-linecap="round" />
<path d="M1515.0 104.9 L1527.7 130.2 L1540.4 151.1" fill="none" stroke="#f9e394" stroke-width="1.6" stroke-linejoin="round" stroke-linecap="round" />
<path d="M1176.3 10.8 L1207.0 8.1 L1243.2 10.8 L1264.9 14.5 L1277.0 23.1 L1292.0 10.8" fill="none" stroke="#f9e394" stroke-width="1.6" stroke-linejoin="round" stroke-linecap="round" />
<path d="M1600.0 113.9 L1618.1 126.6 L1636.2 141.0 L1667.8 148.3" fill="none" stroke="#f9e394" stroke-width="1.6" stroke-linejoin="round" stroke-linecap="round" />
<path d="M1406.6 151.1 L1408.4 126.6 L1415.6 112.1 L1418.7 104.0" fill="none" stroke="#f7dcab" stroke-width="1.2" stroke-linejoin="round" stroke-linecap="round" />
<path d="M850.9 -15.0 L850.9 160.0" fill="none" stroke="#c2c2b4" stroke-width="0.9" stroke-linejoin="round" stroke-linecap="round" stroke-dasharray="2.2 1.6"/>
<path d="M850.9 127.5 L972.0 127.5" fill="none" stroke="#c2c2b4" stroke-width="0.9" stroke-linejoin="round" stroke-linecap="round" stroke-dasharray="2.2 1.6"/>
<path d="M972.0 127.5 L1066.0 127.5" fill="none" stroke="#c2c2b4" stroke-width="0.9" stroke-linejoin="round" stroke-linecap="round" stroke-dasharray="2.2 1.6"/>
<path d="M1047.0 -15.0 L1057.0 59.7 L1066.0 126.6 L1057.0 141.0 L1064.2 151.1" fill="none" stroke="#c2c2b4" stroke-width="0.9" stroke-linejoin="round" stroke-linecap="round" stroke-dasharray="2.2 1.6"/>
<path d="M1189.9 95.8 L1189.0 122.9 L1172.7 137.4 L1176.3 151.1" fill="none" stroke="#c2c2b4" stroke-width="0.9" stroke-linejoin="round" stroke-linecap="round" stroke-dasharray="2.2 1.6"/>
<path d="M1196.2 94.0 L1236.0 70.5 L1257.7 70.5 L1268.5 41.6" fill="none" stroke="#c2c2b4" stroke-width="0.9" stroke-linejoin="round" stroke-linecap="round" stroke-dasharray="2.2 1.6"/>
<path d="M1257.7 70.5 L1243.2 100.3 L1254.0 110.3 L1292.0 124.8" fill="none" stroke="#c2c2b4" stroke-width="0.9" stroke-linejoin="round" stroke-linecap="round" stroke-dasharray="2.2 1.6"/>
<path d="M1280.0 119.3 L1307.1 126.6 L1318.0 141.0 L1316.2 151.1" fill="none" stroke="#c2c2b4" stroke-width="0.9" stroke-linejoin="round" stroke-linecap="round" stroke-dasharray="2.2 1.6"/>
<path d="M1557.5 -15.0 L1557.5 59.7" fill="none" stroke="#c2c2b4" stroke-width="0.9" stroke-linejoin="round" stroke-linecap="round" stroke-dasharray="2.2 1.6"/>
<path d="M637.0 166.3 L850.5 166.3" fill="none" stroke="#c2c2b4" stroke-width="0.9" stroke-linejoin="round" stroke-linecap="round" stroke-dasharray="2.2 1.6"/>
<path d="M850.5 150.0 L850.5 323.5" fill="none" stroke="#c2c2b4" stroke-width="0.9" stroke-linejoin="round" stroke-linecap="round" stroke-dasharray="2.2 1.6"/>
<path d="M850.5 246.6 L911.1 246.6" fill="none" stroke="#c2c2b4" stroke-width="0.9" stroke-linejoin="round" stroke-linecap="round" stroke-dasharray="2.2 1.6"/>
<path d="M637.0 323.5 L907.0 323.5" fill="none" stroke="#c2c2b4" stroke-width="0.9" stroke-linejoin="round" stroke-linecap="round" stroke-dasharray="2.2 1.6"/>
<path d="M706.3 324.2 L706.3 505.0" fill="none" stroke="#c2c2b4" stroke-width="0.9" stroke-linejoin="round" stroke-linecap="round" stroke-dasharray="2.2 1.6"/>
<path d="M637.0 472.6 L911.1 472.6" fill="none" stroke="#c2c2b4" stroke-width="0.9" stroke-linejoin="round" stroke-linecap="round" stroke-dasharray="2.2 1.6"/>
<path d="M908.0 324.2 L908.0 472.6" fill="none" stroke="#c2c2b4" stroke-width="0.9" stroke-linejoin="round" stroke-linecap="round" stroke-dasharray="2.2 1.6"/>
<path d="M879.8 472.6 L879.8 490.3 L911.1 490.3" fill="none" stroke="#c2c2b4" stroke-width="0.9" stroke-linejoin="round" stroke-linecap="round" stroke-dasharray="2.2 1.6"/>
<path d="M706.8 500.0 L706.8 669.3" fill="none" stroke="#c2c2b4" stroke-width="0.9" stroke-linejoin="round" stroke-linecap="round" stroke-dasharray="2.2 1.6"/>
<path d="M879.2 500.0 L879.2 647.3 L798.3 647.3" fill="none" stroke="#c2c2b4" stroke-width="0.9" stroke-linejoin="round" stroke-linecap="round" stroke-dasharray="2.2 1.6"/>
<path d="M709.9 680.0 L712.2 691.6 L719.1 703.2 L716.8 726.3 L721.5 768.0 L705.3 772.6 L719.1 812.0 L730.7 814.3 L740.0 837.4 L758.5 846.7 L767.8 858.3 L779.3 856.0 L786.3 828.2 L790.9 818.9 L814.1 828.2 L837.2 832.8 L844.2 818.9 L869.6 823.6 L872.0 846.7 L865.0 865.2 L874.3 899.9" fill="none" stroke="#c2c2b4" stroke-width="0.9" stroke-linejoin="round" stroke-linecap="round" stroke-dasharray="2.2 1.6"/>
<path d="M870.8 749.5 L853.4 781.9 L858.1 818.9" fill="none" stroke="#c2c2b4" stroke-width="0.9" stroke-linejoin="round" stroke-linecap="round" stroke-dasharray="2.2 1.6"/>
<path d="M885.9 899.9 L892.8 876.8 L912.5 874.5" fill="none" stroke="#c2c2b4" stroke-width="0.9" stroke-linejoin="round" stroke-linecap="round" stroke-dasharray="2.2 1.6"/>
<path d="M1787.3 165.6 L1784.9 191.7 L1770.7 224.9 L1761.2 241.6 L1758.8 255.8 L1756.5 281.9" fill="none" stroke="#c2c2b4" stroke-width="0.9" stroke-linejoin="round" stroke-linecap="round" stroke-dasharray="2.2 1.6"/>
<path d="M1800.4 156.1 L1802.7 201.2 L1806.3 229.7 L1808.7 241.6" fill="none" stroke="#c2c2b4" stroke-width="0.9" stroke-linejoin="round" stroke-linecap="round" stroke-dasharray="2.2 1.6"/>
<path d="M1737.5 255.8 L1806.3 257.0" fill="none" stroke="#c2c2b4" stroke-width="0.9" stroke-linejoin="round" stroke-linecap="round" stroke-dasharray="2.2 1.6"/>
<path d="M1737.5 255.8 L1732.7 281.9 L1729.2 315.1" fill="none" stroke="#c2c2b4" stroke-width="0.9" stroke-linejoin="round" stroke-linecap="round" stroke-dasharray="2.2 1.6"/>
<path d="M1730.4 283.1 L1792.1 284.3" fill="none" stroke="#c2c2b4" stroke-width="0.9" stroke-linejoin="round" stroke-linecap="round" stroke-dasharray="2.2 1.6"/>
<path d="M1779.0 284.3 L1777.8 305.6" fill="none" stroke="#c2c2b4" stroke-width="0.9" stroke-linejoin="round" stroke-linecap="round" stroke-dasharray="2.2 1.6"/>
<path d="M1738.7 189.3 L1732.7 224.9 L1737.5 255.8" fill="none" stroke="#c2c2b4" stroke-width="0.9" stroke-linejoin="round" stroke-linecap="round" stroke-dasharray="2.2 1.6"/>
<path d="M1701.2 142.8 L1704.9 160.0" fill="none" stroke="#c2c2b4" stroke-width="0.9" stroke-linejoin="round" stroke-linecap="round" stroke-dasharray="2.2 1.6"/>
<path d="M1125.7 9.9 L1145.6 13.6 L1146.5 18.1 L1156.4 17.2 L1163.6 13.6 L1176.3 16.3 L1181.7 21.7 L1187.2 30.7 L1196.2 27.1 L1210.7 38.0 L1232.4 31.6 L1234.2 35.3 L1259.5 40.7 L1273.9 41.6 L1292.0 31.6" fill="none" stroke="#7d7d7d" stroke-width="1.5" stroke-linejoin="round" stroke-linecap="round" />
<path d="M1280.0 38.0 L1301.7 27.1 L1406.6 88.6 L1417.4 104.9 L1424.6 104.9 L1430.1 122.9 L1442.7 124.8 L1440.9 132.9 L1468.0 151.1" fill="none" stroke="#7d7d7d" stroke-width="1.5" stroke-linejoin="round" stroke-linecap="round" />
<path d="M1873.0 70.5 L1860.4 74.1 L1842.3 75.9 L1831.4 97.6 L1826.0 112.1 L1822.4 130.2" fill="none" stroke="#7d7d7d" stroke-width="1.5" stroke-linejoin="round" stroke-linecap="round" />
<path d="M1821.7 130.0 L1813.4 144.2 L1806.3 156.1 L1800.4 152.5 L1794.4 156.1 L1787.3 165.6 L1701.9 166.8" fill="none" stroke="#7d7d7d" stroke-width="1.5" stroke-linejoin="round" stroke-linecap="round" />
<path d="M1891.8 130.0 L1896.5 139.5" fill="none" stroke="#7d7d7d" stroke-width="1.5" stroke-linejoin="round" stroke-linecap="round" />
<path d="M637.0 669.7 L730.4 669.7 L730.4 655.1 L779.5 655.1 L785.8 660.9 L798.3 673.5 L810.8 685.0" fill="none" stroke="#7d7d7d" stroke-width="1.7" stroke-linejoin="round" stroke-linecap="round" />
<path d="M806.0 680.0 L823.3 691.6 L832.6 710.1 L837.2 724.0 L853.4 737.9 L874.3 748.3 L883.5 740.2 L890.5 724.0 L899.7 719.4 L911.3 721.7" fill="none" stroke="#7d7d7d" stroke-width="1.7" stroke-linejoin="round" stroke-linecap="round" />
<text x="671.5" y="56.0" font-size="13" font-family="Liberation Sans, sans-serif" text-anchor="end" fill="#4d4d4d" stroke="#fff" stroke-width="2.2" stroke-linejoin="round" paint-order="stroke" stroke-opacity="0.8">Great Falls</text>
<text x="671.5" y="56.0" font-size="13" font-family="Liberation Sans, sans-serif" text-anchor="end" fill="#4d4d4d" stroke="#4d4d4d" stroke-width="0.35">Great Falls</text>
<text x="652.5" y="86.8" font-size="10.5" font-family="Liberation Sans, sans-serif" textLength="53.5" lengthAdjust="spacing" fill="#8c8c8c" stroke="#fff" stroke-width="2" stroke-linejoin="round" paint-order="stroke" stroke-opacity="0.7">MONTANA</text>
<text x="652.5" y="86.8" font-size="10.5" font-family="Liberation Sans, sans-serif" textLength="53.5" lengthAdjust="spacing" fill="#8c8c8c" stroke="#8c8c8c" stroke-width="0.25">MONTANA</text>
<circle cx="722.5" cy="134.3" r="3.3" fill="#fff" stroke="#6a6a6a" stroke-width="1.3"/>
<text x="701.7" y="129.0" font-size="13" font-family="Liberation Sans, sans-serif" textLength="41.6" lengthAdjust="spacingAndGlyphs" fill="#4d4d4d" stroke="#fff" stroke-width="2.2" stroke-linejoin="round" paint-order="stroke" stroke-opacity="0.8">Billings</text>
<text x="701.7" y="129.0" font-size="13" font-family="Liberation Sans, sans-serif" textLength="41.6" lengthAdjust="spacingAndGlyphs" fill="#4d4d4d" stroke="#4d4d4d" stroke-width="0.35">Billings</text>
<circle cx="929.9" cy="31.1" r="3.3" fill="#fff" stroke="#6a6a6a" stroke-width="1.3"/>
<text x="914.0" y="25.0" font-size="13" font-family="Liberation Sans, sans-serif" textLength="32.7" lengthAdjust="spacingAndGlyphs" fill="#4d4d4d" stroke="#fff" stroke-width="2.2" stroke-linejoin="round" paint-order="stroke" stroke-opacity="0.8">Minot</text>
<text x="914.0" y="25.0" font-size="13" font-family="Liberation Sans, sans-serif" textLength="32.7" lengthAdjust="spacingAndGlyphs" fill="#4d4d4d" stroke="#4d4d4d" stroke-width="0.35">Minot</text>
<circle cx="944.9" cy="91.8" r="3.3" fill="#fff" stroke="#6a6a6a" stroke-width="1.3"/>
<text x="917.8" y="85.9" font-size="13" font-family="Liberation Sans, sans-serif" textLength="56.2" lengthAdjust="spacingAndGlyphs" fill="#4d4d4d" stroke="#fff" stroke-width="2.2" stroke-linejoin="round" paint-order="stroke" stroke-opacity="0.8">Bismarck</text>
<text x="917.8" y="85.9" font-size="13" font-family="Liberation Sans, sans-serif" textLength="56.2" lengthAdjust="spacingAndGlyphs" fill="#4d4d4d" stroke="#4d4d4d" stroke-width="0.35">Bismarck</text>
<circle cx="1059.7" cy="88.6" r="3.3" fill="#fff" stroke="#6a6a6a" stroke-width="1.3"/>
<text x="1043.4" y="83.0" font-size="13" font-family="Liberation Sans, sans-serif" textLength="32.6" lengthAdjust="spacingAndGlyphs" fill="#4d4d4d" stroke="#fff" stroke-width="2.2" stroke-linejoin="round" paint-order="stroke" stroke-opacity="0.8">Fargo</text>
<text x="1043.4" y="83.0" font-size="13" font-family="Liberation Sans, sans-serif" textLength="32.6" lengthAdjust="spacingAndGlyphs" fill="#4d4d4d" stroke="#4d4d4d" stroke-width="0.35">Fargo</text>
<circle cx="1156.8" cy="14.8" r="3.3" fill="#fff" stroke="#6a6a6a" stroke-width="1.3"/>
<text x="1106.7" y="9.0" font-size="13" font-family="Liberation Sans, sans-serif" textLength="100.3" lengthAdjust="spacingAndGlyphs" fill="#4d4d4d" stroke="#fff" stroke-width="2.2" stroke-linejoin="round" paint-order="stroke" stroke-opacity="0.8">International Falls</text>
<text x="1106.7" y="9.0" font-size="13" font-family="Liberation Sans, sans-serif" textLength="100.3" lengthAdjust="spacingAndGlyphs" fill="#4d4d4d" stroke="#4d4d4d" stroke-width="0.35">International Falls</text>
<circle cx="1277.0" cy="23.1" r="3.3" fill="#fff" stroke="#6a6a6a" stroke-width="1.3"/>
<text x="1241.4" y="17.0" font-size="13" font-family="Liberation Sans, sans-serif" textLength="71.6" lengthAdjust="spacingAndGlyphs" fill="#4d4d4d" stroke="#fff" stroke-width="2.2" stroke-linejoin="round" paint-order="stroke" stroke-opacity="0.8">Thunder Bay</text>
<text x="1241.4" y="17.0" font-size="13" font-family="Liberation Sans, sans-serif" textLength="71.6" lengthAdjust="spacingAndGlyphs" fill="#4d4d4d" stroke="#4d4d4d" stroke-width="0.35">Thunder Bay</text>
<text x="1125.3" y="126.2" font-size="10.5" font-family="Liberation Sans, sans-serif" textLength="66.9" lengthAdjust="spacing" fill="#8c8c8c" stroke="#fff" stroke-width="2" stroke-linejoin="round" paint-order="stroke" stroke-opacity="0.7">MINNESOTA</text>
<text x="1125.3" y="126.2" font-size="10.5" font-family="Liberation Sans, sans-serif" textLength="66.9" lengthAdjust="spacing" fill="#8c8c8c" stroke="#8c8c8c" stroke-width="0.25">MINNESOTA</text>
<circle cx="1505.0" cy="19.9" r="3.3" fill="#fff" stroke="#6a6a6a" stroke-width="1.3"/>
<text x="1480.7" y="14.5" font-size="13" font-family="Liberation Sans, sans-serif" textLength="49.7" lengthAdjust="spacingAndGlyphs" fill="#4d4d4d" stroke="#fff" stroke-width="2.2" stroke-linejoin="round" paint-order="stroke" stroke-opacity="0.8">Timmins</text>
<text x="1480.7" y="14.5" font-size="13" font-family="Liberation Sans, sans-serif" textLength="49.7" lengthAdjust="spacingAndGlyphs" fill="#4d4d4d" stroke="#4d4d4d" stroke-width="0.35">Timmins</text>
<circle cx="1418.7" cy="104.0" r="3.3" fill="#fff" stroke="#6a6a6a" stroke-width="1.3"/>
<text x="1375.0" y="98.5" font-size="13" font-family="Liberation Sans, sans-serif" textLength="87.6" lengthAdjust="spacingAndGlyphs" fill="#4d4d4d" stroke="#fff" stroke-width="2.2" stroke-linejoin="round" paint-order="stroke" stroke-opacity="0.8">Sault Ste. Marie</text>
<text x="1375.0" y="98.5" font-size="13" font-family="Liberation Sans, sans-serif" textLength="87.6" lengthAdjust="spacingAndGlyphs" fill="#4d4d4d" stroke="#4d4d4d" stroke-width="0.35">Sault Ste. Marie</text>
<circle cx="1559.0" cy="112.5" r="3.3" fill="#fff" stroke="#6a6a6a" stroke-width="1.3"/>
<text x="1532.0" y="107.6" font-size="13" font-family="Liberation Sans, sans-serif" textLength="54.5" lengthAdjust="spacingAndGlyphs" fill="#4d4d4d" stroke="#fff" stroke-width="2.2" stroke-linejoin="round" paint-order="stroke" stroke-opacity="0.8">North Bay</text>
<text x="1532.0" y="107.6" font-size="13" font-family="Liberation Sans, sans-serif" textLength="54.5" lengthAdjust="spacingAndGlyphs" fill="#4d4d4d" stroke="#4d4d4d" stroke-width="0.35">North Bay</text>
<circle cx="1797.0" cy="91.3" r="3.3" fill="#fff" stroke="#6a6a6a" stroke-width="1.3"/>
<text x="1775.4" y="85.9" font-size="13" font-family="Liberation Sans, sans-serif" textLength="43.4" lengthAdjust="spacingAndGlyphs" fill="#4d4d4d" stroke="#fff" stroke-width="2.2" stroke-linejoin="round" paint-order="stroke" stroke-opacity="0.8">Quebec</text>
<text x="1775.4" y="85.9" font-size="13" font-family="Liberation Sans, sans-serif" textLength="43.4" lengthAdjust="spacingAndGlyphs" fill="#4d4d4d" stroke="#4d4d4d" stroke-width="0.35">Quebec</text>
<circle cx="1667.8" cy="148.3" r="3.3" fill="#fff" stroke="#6a6a6a" stroke-width="1.3"/>
<text x="1645.2" y="142.0" font-size="14" font-family="Liberation Sans, sans-serif" textLength="45.2" lengthAdjust="spacingAndGlyphs" fill="#444" stroke="#fff" stroke-width="2.2" stroke-linejoin="round" paint-order="stroke" stroke-opacity="0.8">Ottawa</text>
<text x="1645.2" y="142.0" font-size="14" font-family="Liberation Sans, sans-serif" textLength="45.2" lengthAdjust="spacingAndGlyphs" fill="#444" stroke="#444" stroke-width="0.35">Ottawa</text>
<circle cx="1728.7" cy="145.5" r="3.3" fill="#fff" stroke="#6a6a6a" stroke-width="1.3"/>
<text x="1703.4" y="140.0" font-size="13" font-family="Liberation Sans, sans-serif" textLength="51.2" lengthAdjust="spacingAndGlyphs" fill="#4d4d4d" stroke="#fff" stroke-width="2.2" stroke-linejoin="round" paint-order="stroke" stroke-opacity="0.8">Montreal</text>
<text x="1703.4" y="140.0" font-size="13" font-family="Liberation Sans, sans-serif" textLength="51.2" lengthAdjust="spacingAndGlyphs" fill="#4d4d4d" stroke="#4d4d4d" stroke-width="0.35">Montreal</text>
<text x="1838.7" y="157.0" font-size="10.5" font-family="Liberation Sans, sans-serif" textLength="34.1" lengthAdjust="spacing" fill="#8c8c8c" stroke="#fff" stroke-width="2" stroke-linejoin="round" paint-order="stroke" stroke-opacity="0.7">MAINE</text>
<text x="1838.7" y="157.0" font-size="10.5" font-family="Liberation Sans, sans-serif" textLength="34.1" lengthAdjust="spacing" fill="#8c8c8c" stroke="#8c8c8c" stroke-width="0.25">MAINE</text>
<circle cx="1739.0" cy="187.4" r="3.3" fill="#fff" stroke="#6a6a6a" stroke-width="1.3"/>
<text x="1710.0" y="183.0" font-size="13" font-family="Liberation Sans, sans-serif" textLength="58.0" lengthAdjust="spacingAndGlyphs" fill="#4d4d4d" stroke="#fff" stroke-width="2.2" stroke-linejoin="round" paint-order="stroke" stroke-opacity="0.8">Burlington</text>
<text x="1710.0" y="183.0" font-size="13" font-family="Liberation Sans, sans-serif" textLength="58.0" lengthAdjust="spacingAndGlyphs" fill="#4d4d4d" stroke="#4d4d4d" stroke-width="0.35">Burlington</text>
<circle cx="1838.0" cy="194.0" r="3.3" fill="#fff" stroke="#6a6a6a" stroke-width="1.3"/>
<text x="1815.0" y="188.0" font-size="13" font-family="Liberation Sans, sans-serif" textLength="46.4" lengthAdjust="spacingAndGlyphs" fill="#4d4d4d" stroke="#fff" stroke-width="2.2" stroke-linejoin="round" paint-order="stroke" stroke-opacity="0.8">Augusta</text>
<text x="1815.0" y="188.0" font-size="13" font-family="Liberation Sans, sans-serif" textLength="46.4" lengthAdjust="spacingAndGlyphs" fill="#4d4d4d" stroke="#4d4d4d" stroke-width="0.35">Augusta</text>
<text x="1772.6" y="219.7" font-size="10.5" font-family="Liberation Sans, sans-serif" textLength="24.7" lengthAdjust="spacing" fill="#8c8c8c" stroke="#fff" stroke-width="2" stroke-linejoin="round" paint-order="stroke" stroke-opacity="0.7">NEW</text>
<text x="1772.6" y="219.7" font-size="10.5" font-family="Liberation Sans, sans-serif" textLength="24.7" lengthAdjust="spacing" fill="#8c8c8c" stroke="#8c8c8c" stroke-width="0.25">NEW</text>
<text x="1751.7" y="232.5" font-size="10.5" font-family="Liberation Sans, sans-serif" textLength="66.3" lengthAdjust="spacing" fill="#8c8c8c" stroke="#fff" stroke-width="2" stroke-linejoin="round" paint-order="stroke" stroke-opacity="0.7">HAMPSHIRE</text>
<text x="1751.7" y="232.5" font-size="10.5" font-family="Liberation Sans, sans-serif" textLength="66.3" lengthAdjust="spacing" fill="#8c8c8c" stroke="#8c8c8c" stroke-width="0.25">HAMPSHIRE</text>
<circle cx="1801.0" cy="272.0" r="3.3" fill="#fff" stroke="#6a6a6a" stroke-width="1.3"/>
<text x="1781.4" y="267.0" font-size="13" font-family="Liberation Sans, sans-serif" textLength="39.9" lengthAdjust="spacingAndGlyphs" fill="#4d4d4d" stroke="#fff" stroke-width="2.2" stroke-linejoin="round" paint-order="stroke" stroke-opacity="0.8">Boston</text>
<text x="1781.4" y="267.0" font-size="13" font-family="Liberation Sans, sans-serif" textLength="39.9" lengthAdjust="spacingAndGlyphs" fill="#4d4d4d" stroke="#4d4d4d" stroke-width="0.35">Boston</text>
<text x="1713.0" y="302.6" font-size="10.5" font-family="Liberation Sans, sans-serif" textLength="79.0" lengthAdjust="spacing" fill="#8c8c8c" stroke="#fff" stroke-width="2" stroke-linejoin="round" paint-order="stroke" stroke-opacity="0.7">CONNECTICUT</text>
<text x="1713.0" y="302.6" font-size="10.5" font-family="Liberation Sans, sans-serif" textLength="79.0" lengthAdjust="spacing" fill="#8c8c8c" stroke="#8c8c8c" stroke-width="0.25">CONNECTICUT</text>
<circle cx="1716.0" cy="334.0" r="3.3" fill="#fff" stroke="#6a6a6a" stroke-width="1.3"/>
<text x="1747.7" y="328.0" font-size="15" font-family="Liberation Sans, sans-serif" text-anchor="end" fill="#3c3c3c" stroke="#fff" stroke-width="2.2" stroke-linejoin="round" paint-order="stroke" stroke-opacity="0.8">New York</text>
<text x="1747.7" y="328.0" font-size="15" font-family="Liberation Sans, sans-serif" text-anchor="end" fill="#3c3c3c" stroke="#3c3c3c" stroke-width="0.5">New York</text>
<text x="1676.0" y="359.7" font-size="10.5" font-family="Liberation Sans, sans-serif" textLength="64.7" lengthAdjust="spacing" fill="#8c8c8c" stroke="#fff" stroke-width="2" stroke-linejoin="round" paint-order="stroke" stroke-opacity="0.7">NEW JERSEY</text>
<text x="1676.0" y="359.7" font-size="10.5" font-family="Liberation Sans, sans-serif" textLength="64.7" lengthAdjust="spacing" fill="#8c8c8c" stroke="#8c8c8c" stroke-width="0.25">NEW JERSEY</text>
<circle cx="784.7" cy="252.4" r="3.3" fill="#fff" stroke="#6a6a6a" stroke-width="1.3"/>
<text x="765.3" y="246.3" font-size="13" font-family="Liberation Sans, sans-serif" textLength="39.7" lengthAdjust="spacingAndGlyphs" fill="#4d4d4d" stroke="#fff" stroke-width="2.2" stroke-linejoin="round" paint-order="stroke" stroke-opacity="0.8">Casper</text>
<text x="765.3" y="246.3" font-size="13" font-family="Liberation Sans, sans-serif" textLength="39.7" lengthAdjust="spacingAndGlyphs" fill="#4d4d4d" stroke="#4d4d4d" stroke-width="0.35">Casper</text>
<circle cx="828.0" cy="318.2" r="3.3" fill="#fff" stroke="#6a6a6a" stroke-width="1.3"/>
<text x="800.0" y="313.0" font-size="13" font-family="Liberation Sans, sans-serif" textLength="56.8" lengthAdjust="spacingAndGlyphs" fill="#4d4d4d" stroke="#fff" stroke-width="2.2" stroke-linejoin="round" paint-order="stroke" stroke-opacity="0.8">Cheyenne</text>
<text x="800.0" y="313.0" font-size="13" font-family="Liberation Sans, sans-serif" textLength="56.8" lengthAdjust="spacingAndGlyphs" fill="#4d4d4d" stroke="#4d4d4d" stroke-width="0.35">Cheyenne</text>
<text x="662.5" y="327.5" font-size="13" font-family="Liberation Sans, sans-serif" text-anchor="end" fill="#4d4d4d" stroke="#fff" stroke-width="2.2" stroke-linejoin="round" paint-order="stroke" stroke-opacity="0.8">Salt Lake City</text>
<text x="662.5" y="327.5" font-size="13" font-family="Liberation Sans, sans-serif" text-anchor="end" fill="#4d4d4d" stroke="#4d4d4d" stroke-width="0.35">Salt Lake City</text>
<circle cx="823.4" cy="371.6" r="3.3" fill="#fff" stroke="#6a6a6a" stroke-width="1.3"/>
<text x="800.8" y="365.0" font-size="14" font-family="Liberation Sans, sans-serif" textLength="45.6" lengthAdjust="spacingAndGlyphs" fill="#444" stroke="#fff" stroke-width="2.2" stroke-linejoin="round" paint-order="stroke" stroke-opacity="0.8">Denver</text>
<text x="800.8" y="365.0" font-size="14" font-family="Liberation Sans, sans-serif" textLength="45.6" lengthAdjust="spacingAndGlyphs" fill="#444" stroke="#444" stroke-width="0.35">Denver</text>
<circle cx="828.2" cy="405.3" r="3.3" fill="#fff" stroke="#6a6a6a" stroke-width="1.3"/>
<text x="779.5" y="399.8" font-size="13" font-family="Liberation Sans, sans-serif" textLength="97.2" lengthAdjust="spacingAndGlyphs" fill="#4d4d4d" stroke="#fff" stroke-width="2.2" stroke-linejoin="round" paint-order="stroke" stroke-opacity="0.8">Colorado Springs</text>
<text x="779.5" y="399.8" font-size="13" font-family="Liberation Sans, sans-serif" textLength="97.2" lengthAdjust="spacingAndGlyphs" fill="#4d4d4d" stroke="#4d4d4d" stroke-width="0.35">Colorado Springs</text>
<text x="907.4" y="422.4" font-size="19" font-family="Liberation Sans, sans-serif" font-weight="bold" fill="#222" stroke="#fff" stroke-width="2.5" paint-order="stroke">United States</text>
<circle cx="796.2" cy="519.6" r="3.3" fill="#fff" stroke="#6a6a6a" stroke-width="1.3"/>
<text x="771.5" y="514.2" font-size="13" font-family="Liberation Sans, sans-serif" textLength="49.4" lengthAdjust="spacingAndGlyphs" fill="#4d4d4d" stroke="#fff" stroke-width="2.2" stroke-linejoin="round" paint-order="stroke" stroke-opacity="0.8">Santa Fe</text>
<text x="771.5" y="514.2" font-size="13" font-family="Liberation Sans, sans-serif" textLength="49.4" lengthAdjust="spacingAndGlyphs" fill="#4d4d4d" stroke="#4d4d4d" stroke-width="0.35">Santa Fe</text>
<text x="757.5" y="564.8" font-size="10.5" font-family="Liberation Sans, sans-serif" textLength="72.1" lengthAdjust="spacing" fill="#8c8c8c" stroke="#fff" stroke-width="2" stroke-linejoin="round" paint-order="stroke" stroke-opacity="0.7">NEW MEXICO</text>
<text x="757.5" y="564.8" font-size="10.5" font-family="Liberation Sans, sans-serif" textLength="72.1" lengthAdjust="spacing" fill="#8c8c8c" stroke="#8c8c8c" stroke-width="0.25">NEW MEXICO</text>
<circle cx="780.0" cy="655.7" r="3.3" fill="#fff" stroke="#6a6a6a" stroke-width="1.3"/>
<text x="759.6" y="650.5" font-size="13" font-family="Liberation Sans, sans-serif" textLength="41.2" lengthAdjust="spacingAndGlyphs" fill="#4d4d4d" stroke="#fff" stroke-width="2.2" stroke-linejoin="round" paint-order="stroke" stroke-opacity="0.8">El Paso</text>
<text x="759.6" y="650.5" font-size="13" font-family="Liberation Sans, sans-serif" textLength="41.2" lengthAdjust="spacingAndGlyphs" fill="#4d4d4d" stroke="#4d4d4d" stroke-width="0.35">El Paso</text>
<circle cx="652.0" cy="639.6" r="3.3" fill="#fff" stroke="#6a6a6a" stroke-width="1.3"/>
<text x="671.9" y="634.8" font-size="13" font-family="Liberation Sans, sans-serif" text-anchor="end" fill="#4d4d4d" stroke="#fff" stroke-width="2.2" stroke-linejoin="round" paint-order="stroke" stroke-opacity="0.8">Tucson</text>
<text x="671.9" y="634.8" font-size="13" font-family="Liberation Sans, sans-serif" text-anchor="end" fill="#4d4d4d" stroke="#4d4d4d" stroke-width="0.35">Tucson</text>
<circle cx="652.0" cy="669.7" r="3.3" fill="#fff" stroke="#6a6a6a" stroke-width="1.3"/>
<text x="673.0" y="665.0" font-size="13" font-family="Liberation Sans, sans-serif" text-anchor="end" fill="#7a7a7a" stroke="#fff" stroke-width="2.2" stroke-linejoin="round" paint-order="stroke" stroke-opacity="0.8">Nogales</text>
<text x="673.0" y="665.0" font-size="13" font-family="Liberation Sans, sans-serif" text-anchor="end" fill="#7a7a7a" stroke="#7a7a7a" stroke-width="0.1">Nogales</text>
<text x="656.0" y="531.0" font-size="13" font-family="Liberation Sans, sans-serif" text-anchor="end" fill="#4d4d4d" stroke="#fff" stroke-width="2.2" stroke-linejoin="round" paint-order="stroke" stroke-opacity="0.8">Flagstaff</text>
<text x="656.0" y="531.0" font-size="13" font-family="Liberation Sans, sans-serif" text-anchor="end" fill="#4d4d4d" stroke="#4d4d4d" stroke-width="0.35">Flagstaff</text>
<circle cx="912.0" cy="536.6" r="3.3" fill="#fff" stroke="#6a6a6a" stroke-width="1.3"/>
<text x="890.9" y="531.3" font-size="13" font-family="Liberation Sans, sans-serif"  fill="#4d4d4d" stroke="#fff" stroke-width="2.2" stroke-linejoin="round" paint-order="stroke" stroke-opacity="0.8">Amarillo</text>
<text x="890.9" y="531.3" font-size="13" font-family="Liberation Sans, sans-serif"  fill="#4d4d4d" stroke="#4d4d4d" stroke-width="0.35">Amarillo</text>
<circle cx="652.0" cy="744.8" r="3.3" fill="#fff" stroke="#6a6a6a" stroke-width="1.3"/>
<text x="682.0" y="740.2" font-size="13" font-family="Liberation Sans, sans-serif" text-anchor="end" fill="#4d4d4d" stroke="#fff" stroke-width="2.2" stroke-linejoin="round" paint-order="stroke" stroke-opacity="0.8">Hermosillo</text>
<text x="682.0" y="740.2" font-size="13" font-family="Liberation Sans, sans-serif" text-anchor="end" fill="#4d4d4d" stroke="#4d4d4d" stroke-width="0.35">Hermosillo</text>
<circle cx="653.0" cy="782.6" r="3.3" fill="#fff" stroke="#6a6a6a" stroke-width="1.3"/>
<text x="679.3" y="776.5" font-size="13" font-family="Liberation Sans, sans-serif" text-anchor="end" fill="#4d4d4d" stroke="#fff" stroke-width="2.2" stroke-linejoin="round" paint-order="stroke" stroke-opacity="0.8">Guaymas</text>
<text x="679.3" y="776.5" font-size="13" font-family="Liberation Sans, sans-serif" text-anchor="end" fill="#4d4d4d" stroke="#4d4d4d" stroke-width="0.35">Guaymas</text>
<circle cx="791.8" cy="759.9" r="3.3" fill="#fff" stroke="#6a6a6a" stroke-width="1.3"/>
<text x="748.8" y="753.0" font-size="13" font-family="Liberation Sans, sans-serif" textLength="86.2" lengthAdjust="spacingAndGlyphs" fill="#4d4d4d" stroke="#fff" stroke-width="2.2" stroke-linejoin="round" paint-order="stroke" stroke-opacity="0.8">Chihuahua City</text>
<text x="748.8" y="753.0" font-size="13" font-family="Liberation Sans, sans-serif" textLength="86.2" lengthAdjust="spacingAndGlyphs" fill="#4d4d4d" stroke="#4d4d4d" stroke-width="0.35">Chihuahua City</text>
<circle cx="868.7" cy="859.7" r="3.3" fill="#fff" stroke="#6a6a6a" stroke-width="1.3"/>
<text x="847.2" y="854.8" font-size="13" font-family="Liberation Sans, sans-serif" textLength="43.3" lengthAdjust="spacingAndGlyphs" fill="#4d4d4d" stroke="#fff" stroke-width="2.2" stroke-linejoin="round" paint-order="stroke" stroke-opacity="0.8">Torre&#243;n</text>
<text x="847.2" y="854.8" font-size="13" font-family="Liberation Sans, sans-serif" textLength="43.3" lengthAdjust="spacingAndGlyphs" fill="#4d4d4d" stroke="#4d4d4d" stroke-width="0.35">Torre&#243;n</text>
<circle cx="753.9" cy="883.3" r="3.3" fill="#fff" stroke="#6a6a6a" stroke-width="1.3"/>
<text x="730.0" y="879.0" font-size="13" font-family="Liberation Sans, sans-serif" textLength="48.2" lengthAdjust="spacingAndGlyphs" fill="#4d4d4d" stroke="#fff" stroke-width="2.2" stroke-linejoin="round" paint-order="stroke" stroke-opacity="0.8">Culiac&#225;n</text>
<text x="730.0" y="879.0" font-size="13" font-family="Liberation Sans, sans-serif" textLength="48.2" lengthAdjust="spacingAndGlyphs" fill="#4d4d4d" stroke="#4d4d4d" stroke-width="0.35">Culiac&#225;n</text>
</svg><!--ME-->
</div>

<!-- SIDEBAR -->
<div id="sidebar">
<svg class="abs" style="left:35px;top:18px" width="180" height="64" viewBox="35 18 180 64">
<g fill="#1b4b91">
<path d="M43.6 24.2H52.3L60.3 59L68.3 24.2H76V72.8H70.2V39.6L63.1 72.8H57L49.5 39.6V72.8H43.6Z"/>
<path d="M80.9 72.8L90.3 24.2H99.7L109.1 72.8H100.6L98.5 62.1H91.5L89.4 72.8ZM95 36.7L91.5 56H98.5Z" fill-rule="evenodd"/>
<rect x="83.3" y="57.3" width="22.5" height="1.5" fill="#e3e9f3"/>
<path d="M113.6 24.2H125.7V30.2H122.1V45.2H125.7V50.8H122.1V72.8H113.6Z"/>
<path d="M127.3 24.2H131C137.5 24.2 140.4 28 140.4 37.5C140.4 47 137.5 50.8 131 50.8H127.3V45.2H128.6C130.8 45.2 131.3 43.5 131.3 37.6C131.3 31.8 130.8 30.2 128.6 30.2H127.3Z"/>
</g>
<g fill="#ffcb05">
<path d="M157.9 24.2V30.9C154.6 31.2 153.2 33.5 153.2 38V59C153.2 63.5 154.6 65.6 157.9 65.9V72.8C148.5 72.5 144.7 68.5 144.7 59V38C144.7 28.5 148.5 24.5 157.9 24.2Z"/>
<path d="M159 24.2C168.2 24.5 171.9 28.5 171.9 38V59C171.9 68.5 168.2 72.5 159 72.8V65.9C162 65.6 163 63.5 163 59V38C163 33.5 162 31.2 159 30.9Z"/>
<path d="M188.1 24.2V30.9C185.5 31.2 184.3 33.3 184.3 38V59C184.3 63.7 185.5 65.6 188.1 65.9V72.8C179.5 72.5 176.2 68.5 176.2 59V38C176.2 28.5 179.5 24.5 188.1 24.2Z"/>
<path d="M189.6 24.2C198 24.5 201.4 28.3 201.4 37V40.6H193.2V37C193.2 33 192.3 31.2 189.6 30.9Z"/>
<path d="M189.6 65.9C192.6 65.6 193.8 63.5 193.8 59.5V54.1H188.9V47.9H201.7V72.8H196.5L195.6 69.5C194.3 71.6 192.3 72.6 189.6 72.8Z"/>
</g>
<path d="M158.4 47.3C154.8 47.3 152 50 152 53.5C152 57.5 155.5 61.2 158.4 65.7C161.3 61.2 164.9 57.5 164.9 53.5C164.9 50 162 47.3 158.4 47.3Z" fill="#1b4b91"/>
<circle cx="158.4" cy="53.5" r="2.4" fill="#ffcb05"/>
<rect x="37.3" y="73.7" width="170" height="1.3" fill="#ffcb05"/>
</svg>
<div id="sidesep"></div>
<div class="nav" style="top:133.2px"><svg style="left:0;top:0;width:213px;height:47px" viewBox="16 133.2 213 47"><path d="M28.2 147.4L36.2 145L44.7 148.6L52.9 146.4V165L44.7 167.3L36.2 163.8L28.2 166Z M36.2 145V163.8 M44.7 148.6V167.3"/></svg><span>Story Overview</span></div>
<div class="nav" style="top:186.9px"><svg style="left:0;top:0;width:213px;height:47px" viewBox="16 186.9 213 47"><path d="M40.6 219.8C36.5 215.6 32.2 212.4 32.2 207.8a8.4 8.4 0 0 1 16.8 0C49 212.4 44.700 215.6 40.6 219.8Z"/><circle cx="40.6" cy="207.7" r="3.3"/><path d="M32.6 221.6H48.6"/></svg><span>Add Story</span></div>
<div class="nav" style="top:240.5px"><svg style="left:0;top:0;width:213px;height:47px" viewBox="16 240.5 213 47"><path d="M34 254.2H43.6L49 260V271.600a2 2 0 0 1-2 2H34a2 2 0 0 1-2-2V256.2a2 2 0 0 1 2-2Z M43.6 254.200V260H49"/><path d="M40.6 271V264.8 M37.800 267.4L40.600 264.600L43.400 267.400" stroke-width="1.4"/></svg><span>Add/Upload Data</span></div>
<div class="nav" style="top:294.2px"><svg style="left:0;top:0;width:213px;height:47px" viewBox="16 294.2 213 47"><path d="M40 329.8H30.500a2.700 2.700 0 0 1-2.7-2.700V316.500a4 4 0 0 1 4-4H49a4 4 0 0 1 4 4V317.500 M27.800 318.2H39 M33.500 312.300C33.500 309 34.500 306.400 37 306.400H43.500L47.500 310.200V312.300 M43.400 306.600V310.300H47.300"/><circle cx="47" cy="323.900" r="3.200"/><path d="M47 318.600V320.400 M47 327.400V329.200 M41.700 323.900H43.500 M50.500 323.900H52.300 M43.300 320.200L44.500 321.400 M49.500 326.400L50.700 327.600 M43.300 327.600L44.500 326.400 M49.500 321.400L50.700 320.200" stroke-width="1.8"/></svg><span>Process Data</span></div>
<div class="nav" style="top:347.9px"><svg style="left:0;top:0;width:213px;height:47px" viewBox="16 347.9 213 47"><path d="M40.5 360.600H33.500a3.500 3.500 0 0 0-3.500 3.500V378.500a3.500 3.500 0 0 0 3.500 3.500H48a3.500 3.500 0 0 0 3.500-3.500V373.500 M38.500 360.800L37.700 368.500L30.200 374 M37.700 368.500L44 377.500L39 381.800 M44 377.500H51.300"/><path d="M47 373C44.500 370.500 42 368.300 42 365.300a5 5 0 0 1 10 0C52 368.300 49.500 370.500 47 373Z"/><circle cx="47" cy="365.300" r="1" fill="#5b6577" stroke-width="1"/></svg><span>Base Map</span></div>
<div class="nav" style="top:401.5px"><svg style="left:0;top:0;width:213px;height:47px" viewBox="16 401.5 213 47"><path d="M41 435.300H32a2 2 0 0 1-2-2V417a2 2 0 0 1 2-2H48.800a2 2 0 0 1 2 2V427"/><path d="M38.500 420.500H46.500 M38.500 425H46.500 M38.500 429.500H41.500" /><path d="M34.300 420.500H34.800 M34.300 425H34.800 M34.300 429.500H34.800" stroke-width="2"/><path d="M41.500 435.500C42.500 431.500 45 430.300 47.200 430.300V428L51.500 431.800L47.200 435.500V433.200C45 433.200 43 433.800 41.500 435.500Z" fill="#5b6577" stroke-width="0.800"/></svg><span>Preview &amp; Share</span></div>
<div class="nav active" style="top:455.2px"><svg style="left:0;top:0;width:213px;height:47px" viewBox="16 455.2 213 47"><path d="M35 476.500L29.500 479.800V486.500a3 3 0 0 0 3 3H48.500a3 3 0 0 0 3-3V479.800L46 476.500 M29.800 480.500L44.500 489.200 M51.200 480.500L38.500 484.200"/><path d="M40.500 479.500C38 476.800 35.500 474.800 35.500 472.200a5 5 0 0 1 10 0C45.500 474.800 43 476.800 40.500 479.500Z"/><circle cx="40.500" cy="472.200" r="1" fill="#45516a" stroke-width="1"/></svg><span>GIS Data</span></div>
<svg class="abs" style="left:26px;top:758px" width="28" height="28" viewBox="26 758 28 28"><path d="M33 777.300V771.300a6 6 0 0 1 12 0V777.300L46.300 778.800V779.300H31.700V778.800Z M37.200 779.800a1.900 1.900 0 0 0 3.600 0" fill="none" stroke="#1d2b2b" stroke-width="1.300" stroke-linejoin="round"/><circle cx="47.600" cy="763.300" r="2.300" fill="#e0122d"/></svg>
<div class="abs" style="left:66px;top:764px;font-size:18px;line-height:21px;color:#000;white-space:nowrap;letter-spacing:0.12px">Notifications</div>
<div class="abs" style="left:24px;top:814px;width:33px;height:33px;border-radius:50%;background:#1b4b91;box-shadow:0 4px 9px rgba(0,0,0,.32);color:#fff;font-size:18px;line-height:34px;text-align:center;-webkit-text-stroke:0.300px #fff">A</div>
<div class="abs" style="left:68px;top:821.500px;font-size:18px;line-height:21px;color:#111;white-space:nowrap;letter-spacing:-0.2px">Ashay</div>
</div>
<div id="collapse"><svg class="abs" style="left:3px;top:10px" width="14" height="20" viewBox="0 0 14 20"><path d="M10 3.5 L4 10 L10 16.5" fill="none" stroke="#1b4a8f" stroke-width="1.4"/></svg></div>

<!-- PANEL -->
<div id="panel">
<div id="phead"><div id="ptitle">GIS Data</div>
<svg class="abs" style="left:374px;top:4px" width="18" height="18" viewBox="0 0 18 18"><path d="M2.5 2.5 L15.5 15.5 M15.5 2.5 L2.5 15.5" stroke="#000" stroke-width="1.7" fill="none"/></svg>
</div>
<div id="pbody">
<div class="abs" id="search" style="left:18px;top:48.500px;width:363px;height:54px;border-radius:6px;background:#f1f2fb;box-shadow:0 0 7px 1.500px rgba(196,64,178,.78)"></div>
<div class="abs" style="left:36px;top:64px;width:274.500px;height:24px;overflow:hidden;font-size:17.500px;line-height:24px;color:#000;white-space:nowrap;letter-spacing:0.01px">Storage Tank in united states of america</div>
<div class="abs" style="left:36px;top:101.500px;width:291px;height:1px;background:#a9adb8"></div>
<div class="abs" style="left:327px;top:48.500px;width:54px;height:54px;background:#1b4b91;border-radius:0 6px 6px 0"><svg class="abs" style="left:11px;top:12px" width="32" height="32" viewBox="0 0 32 32"><circle cx="14.500" cy="14" r="10" fill="none" stroke="#fff" stroke-width="2"/><path d="M21.800 21.300L28.500 28" stroke="#fff" stroke-width="2.200" stroke-linecap="round"/></svg></div>
<div class="abs" style="left:0;top:113px;width:400px;text-align:center;font-size:17.500px;line-height:24px;color:#1b4a8f;white-space:nowrap;letter-spacing:0.04px">Storage Tank in united states of america</div>
<div class="abs" style="left:11px;top:174px;width:120px;height:35px;border-radius:18px;background:#1b4b91;color:#fff;font-size:14.500px;line-height:35px;text-align:center;letter-spacing:0px;-webkit-text-stroke:0.350px #fff">Download</div>
<div class="abs" style="left:147px;top:183px;font-size:14.500px;line-height:17px;color:#1b4a8f;white-space:nowrap;letter-spacing:-0.15px">Add on Map</div>
<svg class="abs" style="left:229px;top:179px" width="26" height="26" viewBox="476 245 26 26"><path d="M484.500 251.800L478.900 250.300V265.300L485.600 267.800L493 265.300L499.600 267.800V252.600L494.200 250.900M485.600 259.500V267.800M493 260V265.300" fill="none" stroke="#1b4a8f" stroke-width="1.600" stroke-linejoin="round"/><path d="M489.200 260.600C487 257.800 485 255.600 485 253.200a4.200 4.200 0 0 1 8.400 0C493.400 255.600 491.400 257.800 489.200 260.600Z" fill="#eef1fa" stroke="#1b4a8f" stroke-width="1.500"/><circle cx="489.200" cy="253.300" r="1.100" fill="#1b4a8f"/></svg>
<div class="abs" style="left:280px;top:183px;font-size:14.500px;line-height:17px;color:#1b4a8f;white-space:nowrap;letter-spacing:-0.15px">Table View</div>
<svg class="abs" style="left:356px;top:183px" width="22" height="18" viewBox="603 249 22 18"><rect x="604.100" y="250.600" width="19.600" height="14.900" rx="0.800" fill="#1b4a8f"/><path d="M605 255.600H623M605 260.500H623M609 255.600V264.800" stroke="#eef1fa" stroke-width="0.900" fill="none"/></svg>
<div class="abs" style="left:0;top:230px;width:400px;text-align:center;font-size:17.500px;line-height:24px;color:#1b4a8f;white-space:nowrap;letter-spacing:-0.2px"><span style="text-decoration:underline;text-underline-offset:2px">&lt; Back to Layer Data</span></div>
</div>
</div>
<div id="strip"></div>

<div id="tw">
<div id="twh">
<div class="abs" style="left:17px;top:9px;font-size:18px;line-height:22px;color:#111;white-space:nowrap;letter-spacing:-0.4px">View Filtered Layer Data as:</div>
<svg class="abs" style="left:14px;top:44px" width="26" height="26" viewBox="0 0 26 26"><circle cx="13" cy="13" r="9.800" fill="none" stroke="#1b4b91" stroke-width="2"/><circle cx="13" cy="13" r="5.400" fill="#1b4b91"/></svg>
<div class="abs" style="left:44px;top:53px;font-size:14px;line-height:17px;color:#1b4a8f;font-weight:bold;letter-spacing:-0.3px">POINT</div>
<div class="abs" style="left:94px;top:46px;font-size:14px;line-height:17px;color:#1b4a8f;font-weight:bold;letter-spacing:0.3px">69074</div>
<svg class="abs" style="left:142px;top:44px" width="26" height="26" viewBox="0 0 26 26"><circle cx="13" cy="13" r="9.800" fill="none" stroke="#555" stroke-width="1.800"/></svg>
<div class="abs" style="left:171px;top:53px;font-size:14px;line-height:17px;color:#111;letter-spacing:-0.2px">LINE</div>
<div class="abs" style="left:210px;top:46px;font-size:14px;line-height:17px;color:#1b4a8f;font-weight:bold">9</div>
<svg class="abs" style="left:226px;top:44px" width="26" height="26" viewBox="0 0 26 26"><circle cx="13" cy="13" r="9.800" fill="none" stroke="#555" stroke-width="1.800"/></svg>
<div class="abs" style="left:255px;top:53px;font-size:13.500px;line-height:17px;color:#111;letter-spacing:-0.35px">POLYGON</div>
<div class="abs" style="left:327px;top:46px;font-size:14px;line-height:17px;color:#1b4a8f;font-weight:bold;letter-spacing:0.2px">128609</div>
<svg class="abs" style="left:700px;top:0" width="90" height="30" viewBox="1612 161 90 30"><path d="M1620.300 170H1635.600" stroke="#222" stroke-width="2"/><rect x="1656.600" y="162.600" width="15" height="13.800" fill="#f3f4f9" stroke="#333" stroke-width="1"/><rect x="1654.400" y="164.900" width="15" height="13.600" fill="#f3f4f9" stroke="#333" stroke-width="1.200"/><path d="M1680.800 162.800L1696.300 177.800M1696.300 162.800L1680.800 177.800" stroke="#000" stroke-width="2.300"/></svg>
</div>
<div id="grid">
<div id="ghead">
<div class="ch" style="left:18.0px">man_made</div>
<div class="cs" style="left:162.2px"></div>
<div class="fi" style="left:17.5px"></div>
<svg class="fic" style="left:131.0px" viewBox="0 0 16 14"><path d="M0.500 2.500H15.500M3.500 7H12.500M6.500 11.500H9.500" stroke="#333" stroke-width="1.700" fill="none"/></svg>
<div class="ch" style="left:182.7px">name</div>
<div class="cs" style="left:326.8px"></div>
<div class="fi" style="left:182.2px"></div>
<svg class="fic" style="left:295.7px" viewBox="0 0 16 14"><path d="M0.500 2.500H15.500M3.500 7H12.500M6.500 11.500H9.500" stroke="#333" stroke-width="1.700" fill="none"/></svg>
<div class="ch" style="left:347.3px">shape0</div>
<div class="cs" style="left:491.5px"></div>
<div class="fi" style="left:346.8px"></div>
<svg class="fic" style="left:460.3px" viewBox="0 0 16 14"><path d="M0.500 2.500H15.500M3.500 7H12.500M6.500 11.500H9.500" stroke="#333" stroke-width="1.700" fill="none"/></svg>
<div class="ch" style="left:512.0px">shape1</div>
<div class="cs" style="left:656.2px"></div>
<div class="fi" style="left:511.5px"></div>
<svg class="fic" style="left:625.0px" viewBox="0 0 16 14"><path d="M0.500 2.500H15.500M3.500 7H12.500M6.500 11.500H9.500" stroke="#333" stroke-width="1.700" fill="none"/></svg>
<div class="ch" style="left:676.7px">s</div>
<div class="fi" style="left:676.2px;width:7px;border-right:0;border-radius:4px 0 0 4px"></div>
<div class="abs" style="left:683px;top:0;width:83px;height:107px;background:#fafafa"></div>
<div class="cs" style="left:684.500px;width:2.500px;z-index:2"></div>
<div class="ch" style="left:700px">Action</div>
<div class="hl" style="top:53px;width:765px"></div>
<div class="hl" style="top:106px;width:790px"></div>
</div>
<div class="row" style="top:107px">
<div class="c" style="left:18px">storage_tank</div>
<div class="c" style="left:347.3px;letter-spacing:-0.02px">united_states_of_...</div>
<div class="c" style="left:512.0px">California</div>
<div class="c" style="left:676.7px">S</div>
<div class="abs" style="left:683px;top:0;width:82px;height:45px;background:#fff"></div>
<svg class="zi" viewBox="0 0 40 32"><ellipse cx="16" cy="12" rx="8.900" ry="7.200" fill="none" stroke="#000" stroke-width="2.100"/><path d="M11.800 12.200H20.200M16 8.700V15.700" stroke="#000" stroke-width="2.100"/><path d="M23.300 18.700L31.300 23.600" stroke="#000" stroke-width="4.400" stroke-linecap="round"/><path d="M24.600 19.500L31 23.400" stroke="#fff" stroke-width="1.500" stroke-linecap="round"/></svg>
</div>
<div class="row" style="top:153px">
<div class="c" style="left:18px">storage_tank</div>
<div class="c" style="left:347.3px;letter-spacing:-0.02px">united_states_of_...</div>
<div class="c" style="left:512.0px">California</div>
<div class="c" style="left:676.7px">A</div>
<div class="abs" style="left:683px;top:0;width:82px;height:45px;background:#fff"></div>
<svg class="zi" viewBox="0 0 40 32"><ellipse cx="16" cy="12" rx="8.900" ry="7.200" fill="none" stroke="#000" stroke-width="2.100"/><path d="M11.800 12.200H20.200M16 8.700V15.700" stroke="#000" stroke-width="2.100"/><path d="M23.300 18.700L31.300 23.600" stroke="#000" stroke-width="4.400" stroke-linecap="round"/><path d="M24.600 19.500L31 23.400" stroke="#fff" stroke-width="1.500" stroke-linecap="round"/></svg>
</div>
<div class="row" style="top:199px">
<div class="c" style="left:18px">storage_tank</div>
<div class="c" style="left:347.3px;letter-spacing:-0.02px">united_states_of_...</div>
<div class="c" style="left:512.0px">California</div>
<div class="c" style="left:676.7px">A</div>
<div class="abs" style="left:683px;top:0;width:82px;height:45px;background:#fff"></div>
<svg class="zi" viewBox="0 0 40 32"><ellipse cx="16" cy="12" rx="8.900" ry="7.200" fill="none" stroke="#000" stroke-width="2.100"/><path d="M11.800 12.200H20.200M16 8.700V15.700" stroke="#000" stroke-width="2.100"/><path d="M23.300 18.700L31.300 23.600" stroke="#000" stroke-width="4.400" stroke-linecap="round"/><path d="M24.600 19.500L31 23.400" stroke="#fff" stroke-width="1.500" stroke-linecap="round"/></svg>
</div>
<div class="row" style="top:245px">
<div class="c" style="left:18px">storage_tank</div>
<div class="c" style="left:347.3px;letter-spacing:-0.02px">united_states_of_...</div>
<div class="c" style="left:512.0px">Washington</div>
<div class="c" style="left:676.7px">W</div>
<div class="abs" style="left:683px;top:0;width:82px;height:45px;background:#fff"></div>
<svg class="zi" viewBox="0 0 40 32"><ellipse cx="16" cy="12" rx="8.900" ry="7.200" fill="none" stroke="#000" stroke-width="2.100"/><path d="M11.800 12.200H20.200M16 8.700V15.700" stroke="#000" stroke-width="2.100"/><path d="M23.300 18.700L31.300 23.600" stroke="#000" stroke-width="4.400" stroke-linecap="round"/><path d="M24.600 19.500L31 23.400" stroke="#fff" stroke-width="1.500" stroke-linecap="round"/></svg>
</div>
<div class="row" style="top:291px">
<div class="c" style="left:18px">storage_tank</div>
<div class="c" style="left:347.3px;letter-spacing:-0.02px">united_states_of_...</div>
<div class="c" style="left:512.0px">Washington</div>
<div class="c" style="left:676.7px">P</div>
<div class="abs" style="left:683px;top:0;width:82px;height:45px;background:#fff"></div>
<svg class="zi" viewBox="0 0 40 32"><ellipse cx="16" cy="12" rx="8.900" ry="7.200" fill="none" stroke="#000" stroke-width="2.100"/><path d="M11.800 12.200H20.200M16 8.700V15.700" stroke="#000" stroke-width="2.100"/><path d="M23.300 18.700L31.300 23.600" stroke="#000" stroke-width="4.400" stroke-linecap="round"/><path d="M24.600 19.500L31 23.400" stroke="#fff" stroke-width="1.500" stroke-linecap="round"/></svg>
</div>
<div class="row" style="top:337px">
<div class="c" style="left:18px">storage_tank</div>
<div class="c" style="left:347.3px;letter-spacing:-0.02px">united_states_of_...</div>
<div class="c" style="left:512.0px">Washington</div>
<div class="c" style="left:676.7px">P</div>
<div class="abs" style="left:683px;top:0;width:82px;height:45px;background:#fff"></div>
<svg class="zi" viewBox="0 0 40 32"><ellipse cx="16" cy="12" rx="8.900" ry="7.200" fill="none" stroke="#000" stroke-width="2.100"/><path d="M11.800 12.200H20.200M16 8.700V15.700" stroke="#000" stroke-width="2.100"/><path d="M23.300 18.700L31.300 23.600" stroke="#000" stroke-width="4.400" stroke-linecap="round"/><path d="M24.600 19.500L31 23.400" stroke="#fff" stroke-width="1.500" stroke-linecap="round"/></svg>
</div>
<div class="row" style="top:383px">
<div class="c" style="left:18px">storage_tank</div>
<div class="c" style="left:347.3px;letter-spacing:-0.02px">united_states_of_...</div>
<div class="c" style="left:512.0px">Washington</div>
<div class="c" style="left:676.7px">P</div>
<div class="abs" style="left:683px;top:0;width:82px;height:45px;background:#fff"></div>
<svg class="zi" viewBox="0 0 40 32"><ellipse cx="16" cy="12" rx="8.900" ry="7.200" fill="none" stroke="#000" stroke-width="2.100"/><path d="M11.800 12.200H20.200M16 8.700V15.700" stroke="#000" stroke-width="2.100"/><path d="M23.300 18.700L31.300 23.600" stroke="#000" stroke-width="4.400" stroke-linecap="round"/><path d="M24.600 19.500L31 23.400" stroke="#fff" stroke-width="1.500" stroke-linecap="round"/></svg>
</div>
<div class="row" style="top:429px">
<div class="c" style="left:18px">storage_tank</div>
<div class="c" style="left:347.3px;letter-spacing:-0.02px">united_states_of_...</div>
<div class="c" style="left:512.0px">California</div>
<div class="c" style="left:676.7px">S</div>
<div class="abs" style="left:683px;top:0;width:82px;height:45px;background:#fff"></div>
<svg class="zi" viewBox="0 0 40 32"><ellipse cx="16" cy="12" rx="8.900" ry="7.200" fill="none" stroke="#000" stroke-width="2.100"/><path d="M11.800 12.200H20.200M16 8.700V15.700" stroke="#000" stroke-width="2.100"/><path d="M23.300 18.700L31.300 23.600" stroke="#000" stroke-width="4.400" stroke-linecap="round"/><path d="M24.600 19.500L31 23.400" stroke="#fff" stroke-width="1.500" stroke-linecap="round"/></svg>
</div>
<div class="row" style="top:475px">
<div class="c" style="left:18px">storage_tank</div>
<div class="c" style="left:347.3px;letter-spacing:-0.02px">united_states_of_...</div>
<div class="c" style="left:512.0px">California</div>
<div class="c" style="left:676.7px">S</div>
<div class="abs" style="left:683px;top:0;width:82px;height:45px;background:#fff"></div>
<svg class="zi" viewBox="0 0 40 32"><ellipse cx="16" cy="12" rx="8.900" ry="7.200" fill="none" stroke="#000" stroke-width="2.100"/><path d="M11.800 12.200H20.200M16 8.700V15.700" stroke="#000" stroke-width="2.100"/><path d="M23.300 18.700L31.300 23.600" stroke="#000" stroke-width="4.400" stroke-linecap="round"/><path d="M24.600 19.500L31 23.400" stroke="#fff" stroke-width="1.500" stroke-linecap="round"/></svg>
</div>
<div class="row" style="top:521px">
<div class="c" style="left:18px">storage_tank</div>
<div class="c" style="left:347.3px;letter-spacing:-0.02px">united_states_of_...</div>
<div class="c" style="left:512.0px">California</div>
<div class="c" style="left:676.7px">S</div>
<div class="abs" style="left:683px;top:0;width:82px;height:45px;background:#fff"></div>
<svg class="zi" viewBox="0 0 40 32"><ellipse cx="16" cy="12" rx="8.900" ry="7.200" fill="none" stroke="#000" stroke-width="2.100"/><path d="M11.800 12.200H20.200M16 8.700V15.700" stroke="#000" stroke-width="2.100"/><path d="M23.300 18.700L31.300 23.600" stroke="#000" stroke-width="4.400" stroke-linecap="round"/><path d="M24.600 19.500L31 23.400" stroke="#fff" stroke-width="1.500" stroke-linecap="round"/></svg>
</div>
<div id="pin"></div><div class="abs" style="left:0;top:0;width:1px;height:546px;background:#dedede"></div>
<div class="abs" style="left:765px;top:107px;width:25px;height:439px;background:#f1f1f1"></div>
<svg class="abs" style="left:765px;top:107px" width="25" height="439" viewBox="0 0 25 439"><path d="M5.800 16L12 9.800L18.200 16Z" fill="#a3a3a3"/><rect x="2.200" y="24" width="19.600" height="24" fill="#c1c1c1"/><path d="M5.800 423L12 429.400L18.200 423Z" fill="#505050"/></svg>
</div>
<div class="abs" style="left:0;top:649px;width:790px;height:25px;background:#f1f1f1"></div>
<div class="abs" style="left:682px;top:649px;width:1px;height:25px;background:#dcdcdc"></div>
<svg class="abs" style="left:0;top:649px" width="790" height="25" viewBox="0 0 790 25"><path d="M16.500 5.500L9.500 12L16.500 18.500Z" fill="#a3a3a3"/><rect x="25" y="2.500" width="524" height="19.500" fill="#c1c1c1"/><path d="M666.500 5L673.500 12L666.500 19Z" fill="#505050"/><path d="M698.500 5.500L692 12L698.500 18.500Z" fill="#a3a3a3"/><path d="M773 5.500L779.500 12L773 18.500Z" fill="#a3a3a3"/></svg>
<div id="tf">
<div class="abs" style="left:16px;top:32px;font-size:14.500px;line-height:18px;letter-spacing:0.3px;white-space:nowrap;-webkit-text-stroke:0.250px #fff">Items per Page: 200</div>
<div class="abs" style="left:494px;top:23px;width:120px;text-align:center;font-size:14.500px;line-height:19px;letter-spacing:0.35px;-webkit-text-stroke:0.250px #fff">1 - 200 of<br>69074 entries</div>
<div class="abs" style="left:633px;top:32px;font-size:13px;line-height:16px;font-weight:bold;letter-spacing:0.500px;color:#8fb1dd">PREV</div>
<div class="abs" style="left:689px;top:30px;font-size:16px;line-height:19px;-webkit-text-stroke:0.300px #fff">1</div>
<div class="abs" style="left:716px;top:32px;font-size:13px;line-height:16px;font-weight:bold;letter-spacing:0.500px">NEXT</div>
</div>
</div>
<div class="abs" style="left:1691px;top:22px;width:55px;height:50px;border-radius:8px;background:#fff"></div>
<svg class="abs" style="left:1700px;top:28px" width="38" height="38" viewBox="1700 28 38 38"><defs><linearGradient id="aig" x1="0" y1="0" x2="0" y2="1"><stop offset="0" stop-color="#5617a0"/><stop offset="0.55" stop-color="#a32fc4"/><stop offset="1" stop-color="#dc44d6"/></linearGradient></defs>
<rect x="1706" y="34" width="24" height="24.800" rx="4.500" fill="url(#aig)"/>
<circle cx="1726" cy="38.700" r="6.300" fill="#fff"/>
<path d="M1725.800 33.500C1726.400 37 1727.500 38.200 1731 38.800C1727.500 39.400 1726.400 40.600 1725.800 44.100C1725.200 40.600 1724.100 39.400 1720.600 38.800C1724.100 38.200 1725.200 37 1725.800 33.500Z" fill="#6a1fae"/>
<path d="M1710.400 53.200L1714.300 42H1716.100L1720 53.200H1718.300L1717.300 50.200H1713.100L1712.100 53.200ZM1713.600 48.800H1716.800L1715.200 43.900Z" fill="#fff" fill-rule="evenodd"/><rect x="1722.200" y="45.600" width="1.700" height="7.600" fill="#fff"/></svg>
<div class="abs" style="left:1751px;top:22px;width:115px;height:51px;border-radius:10px;background:#1a4a8f"></div>
<svg class="abs" style="left:1764px;top:36px" width="26" height="22" viewBox="1764 36 26 22"><rect x="1766.900" y="43.300" width="18.600" height="10.300" rx="1.200" fill="none" stroke="#dfe6f2" stroke-width="1.200"/><path d="M1772.300 43.200V41.200a1.200 1.200 0 0 1 1.200-1.200H1778.900a1.200 1.200 0 0 1 1.200 1.200V43.200" fill="none" stroke="#dfe6f2" stroke-width="1.200"/><path d="M1767 48.100H1785.400M1771 46.800V49.600M1781.400 46.800V49.600" stroke="#dfe6f2" stroke-width="1.100" fill="none"/></svg>
<div class="abs" style="left:1798px;top:38px;font-size:16px;line-height:19px;color:#fff;white-space:nowrap;letter-spacing:-0.13px">Toolbox</div>
<div class="abs" style="left:1874px;top:19px;width:36px;height:109px;border-radius:4px;background:#fff"></div>
<div class="abs" style="left:1874px;top:55px;width:36px;height:1px;background:#dddddd"></div>
<div class="abs" style="left:1874px;top:91px;width:36px;height:1px;background:#dddddd"></div>
<svg class="abs" style="left:1874px;top:19px" width="36" height="109" viewBox="1874 19 36 109"><path d="M1885 36.900H1898.800M1891.900 30V43.800" stroke="#333" stroke-width="1.700" fill="none"/><path d="M1884.800 73.400H1898.300" stroke="#333" stroke-width="1.700"/><path d="M1891.600 98.600L1896.800 110H1886.400Z" fill="#333b4d"/><path d="M1891.600 121L1896.800 110H1886.400Z" fill="#b6bbce"/><circle cx="1891.600" cy="110" r="1.600" fill="#fff"/></svg>
<div class="abs" style="left:1874px;top:138px;width:36px;height:37px;border-radius:4px;background:#fff"></div>
<svg class="abs" style="left:1874px;top:138px" width="36" height="37" viewBox="1874 138 36 37"><path d="M1899.300 149.200L1885 154.500L1891.600 156.500L1893.600 163Z" fill="none" stroke="#333b4d" stroke-width="1.700" stroke-linejoin="round"/></svg>
<div class="abs" style="left:1702px;top:869px;width:218px;height:16px;background:rgba(255,255,255,.5)"></div>
<div class="abs" style="left:1400px;top:872.500px;width:515px;text-align:right;font-size:12px;line-height:15px;color:#333;white-space:nowrap;letter-spacing:0.52px">&#169; MapTiler &#169; OpenStreetMap contributors</div>
<div class="abs" style="left:1814.500px;top:846px;font-size:12.500px;line-height:16px;color:#1b4a8f;font-weight:bold;white-space:nowrap;letter-spacing:-0.08px">Attribution</div>
<svg class="abs" style="left:1882px;top:841px" width="24" height="24" viewBox="0 0 24 24"><circle cx="12" cy="11.800" r="11" fill="#000"/><circle cx="13.300" cy="6.800" r="1.700" fill="#fff"/><path d="M9.800 10.300L13.800 9.800L11.800 16.800C11.600 17.500 12 17.600 12.800 17.200L13 17.700C11.800 18.600 10.700 18.900 9.900 18.500C9.300 18.200 9.300 17.400 9.500 16.700L10.900 11.600C11 11 10.600 10.900 9.700 10.800Z" fill="#fff"/></svg>
</body>
</html>
